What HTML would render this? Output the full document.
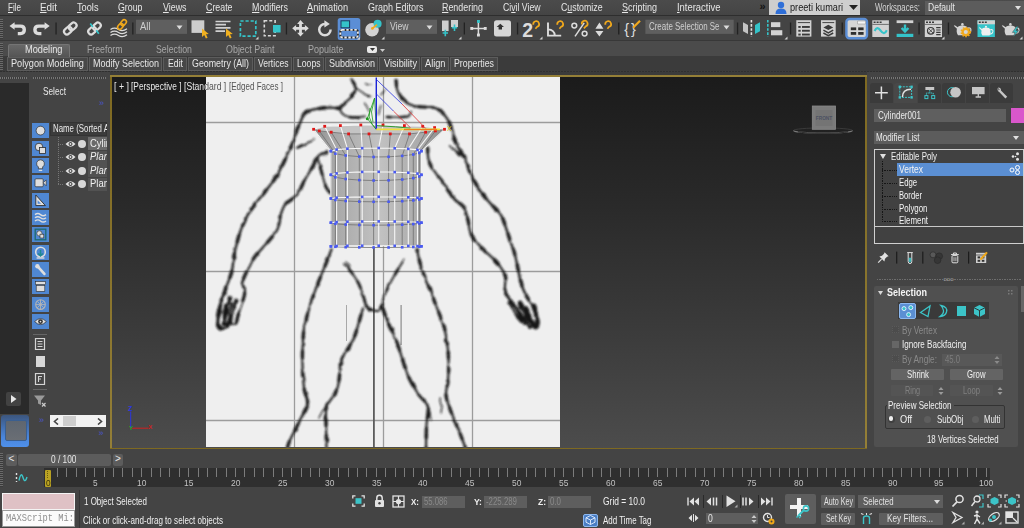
<!DOCTYPE html>
<html><head><meta charset="utf-8"><title>3ds Max</title>
<style>
html,body{margin:0;padding:0;}
body{width:1024px;height:528px;overflow:hidden;background:#444444;position:relative;font-family:"Liberation Sans",sans-serif;}
.r{position:absolute;box-sizing:border-box;}
.t{position:absolute;white-space:nowrap;line-height:1.25;transform-origin:0 0;font-family:"Liberation Sans",sans-serif;}
.m{position:absolute;white-space:nowrap;line-height:1.25;font-family:"Liberation Mono",monospace;}
u{text-decoration:underline;text-underline-offset:1px;}
</style></head>
<body>
<!-- p_top -->
<div class="r" style="left:0px;top:0px;width:1024px;height:16px;background:linear-gradient(#4b4b4b,#444444);"></div>
<div class="r" style="left:0px;top:15px;width:1024px;height:1px;background:#2e2e2e;"></div>
<div class="t" style="left:8px;top:1px;font-size:10.5px;color:#e6e6e6;transform:scaleX(0.769);"><u>F</u>ile</div>
<div class="t" style="left:40px;top:1px;font-size:10.5px;color:#e6e6e6;transform:scaleX(0.940);"><u>E</u>dit</div>
<div class="t" style="left:76.5px;top:1px;font-size:10.5px;color:#e6e6e6;transform:scaleX(0.877);"><u>T</u>ools</div>
<div class="t" style="left:117.5px;top:1px;font-size:10.5px;color:#e6e6e6;transform:scaleX(0.839);"><u>G</u>roup</div>
<div class="t" style="left:162.5px;top:1px;font-size:10.5px;color:#e6e6e6;transform:scaleX(0.845);"><u>V</u>iews</div>
<div class="t" style="left:205.5px;top:1px;font-size:10.5px;color:#e6e6e6;transform:scaleX(0.840);"><u>C</u>reate</div>
<div class="t" style="left:252px;top:1px;font-size:10.5px;color:#e6e6e6;transform:scaleX(0.845);"><u>M</u>odifiers</div>
<div class="t" style="left:307px;top:1px;font-size:10.5px;color:#e6e6e6;transform:scaleX(0.878);"><u>A</u>nimation</div>
<div class="t" style="left:367.5px;top:1px;font-size:10.5px;color:#e6e6e6;transform:scaleX(0.856);">Graph Ed<u>i</u>tors</div>
<div class="t" style="left:442px;top:1px;font-size:10.5px;color:#e6e6e6;transform:scaleX(0.846);"><u>R</u>endering</div>
<div class="t" style="left:503px;top:1px;font-size:10.5px;color:#e6e6e6;transform:scaleX(0.828);">Ci<u>v</u>il View</div>
<div class="t" style="left:560.5px;top:1px;font-size:10.5px;color:#e6e6e6;transform:scaleX(0.837);">C<u>u</u>stomize</div>
<div class="t" style="left:622px;top:1px;font-size:10.5px;color:#e6e6e6;transform:scaleX(0.857);"><u>S</u>cripting</div>
<div class="t" style="left:677px;top:1px;font-size:10.5px;color:#e6e6e6;transform:scaleX(0.897);"><u>I</u>nteractive</div>
<div class="t" style="left:759.5px;top:0px;font-size:11px;color:#121212;font-weight:bold;">&raquo;</div>
<div class="r" style="left:769px;top:0px;width:91px;height:15px;background:#cecece;"></div>
<svg class="r" style="left:775px;top:1px;" width="12" height="13" viewBox="0 0 12 13"><circle cx="6" cy="4" r="3.2" fill="#2f6fd8"/><path d="M0.5 13 Q0.5 7.6 6 7.6 Q11.5 7.6 11.5 13 Z" fill="#2f6fd8"/></svg>
<div class="t" style="left:789.5px;top:1px;font-size:10.5px;color:#1a1a1a;transform:scaleX(0.873);">preeti kumari</div>
<svg class="r" style="left:849px;top:5px;" width="9" height="6" viewBox="0 0 9 6"><path d="M0 0 L9 0 L4.5 5 Z" fill="#222"/></svg>
<div class="t" style="left:874.5px;top:1px;font-size:10.5px;color:#d4d4d4;transform:scaleX(0.744);top:1px;">Workspaces:</div>
<div class="r" style="left:924.5px;top:1px;width:99.5px;height:14px;background:#5c5c5c;"></div>
<svg class="r" style="left:1015px;top:6px;" width="6" height="4" viewBox="0 0 6 4"><path d="M0 0 L6 0 L3 4 Z" fill="#e0e0e0"/></svg>
<div class="t" style="left:928px;top:1px;font-size:10.5px;color:#e6e6e6;transform:scaleX(0.811);top:1px;">Default</div>
<div class="r" style="left:0px;top:16px;width:1024px;height:25px;background:#444444;"></div>
<div class="r" style="left:0px;top:19px;width:3px;height:20px;background:repeating-linear-gradient(#6a6a6a 0 1px,#3a3a3a 1px 2px);"></div>
<svg class="r" style="left:0;top:0" width="1024" height="44" viewBox="0 0 1024 44"><path d="M9.5 26 L14.6 22.3 L14.6 24.4 L20.5 24.4 Q26 24.4 26 29.8 Q26 35.2 20.5 35.2 L17.8 35.2 L17.8 32 L20.3 32 Q22.6 32 22.6 29.8 Q22.6 27.7 20.3 27.7 L14.6 27.7 L14.6 29.8 Z" fill="#dcdcdc"/><path d="M49.7 26 L44.6 22.3 L44.6 24.4 L38.7 24.4 Q33.2 24.4 33.2 29.8 Q33.2 35.2 38.7 35.2 L41.4 35.2 L41.4 32 L38.9 32 Q36.6 32 36.6 29.8 Q36.6 27.7 38.9 27.7 L44.6 27.7 L44.6 29.8 Z" fill="#dcdcdc"/><rect x="55.4" y="22.5" width="1.3" height="12" fill="#222"/><g transform="translate(70.3 28.5) rotate(-42)" fill="none" stroke="#dcdcdc" stroke-width="2.2"><rect x="-7.4" y="-2.9" width="8.5" height="5.8" rx="2.9"/><rect x="-1.1" y="-2.9" width="8.5" height="5.8" rx="2.9"/></g><g transform="translate(94.5 28.5) rotate(-42)" fill="none" stroke="#dcdcdc" stroke-width="2.2"><rect x="-7.4" y="-2.9" width="8.5" height="5.8" rx="2.9"/><rect x="-1.1" y="-2.9" width="8.5" height="5.8" rx="2.9"/></g><path d="M90.3 23.5 L92.8 27 M96.3 30.2 L98.8 33.8" stroke="#35c3c9" stroke-width="1.7"/><path d="M110.5 29.5 Q114.5 26.8 118.5 29.5 T127 28.8 M110.5 32.5 Q114.5 29.8 118.5 32.5 T127 31.8 M110.5 35.5 Q114.5 32.8 118.5 35.5 T127 34.8" fill="none" stroke="#dcdcdc" stroke-width="1.3"/><g transform="translate(122 24.5) rotate(-50)" fill="none" stroke="#f0a81c" stroke-width="1.6"><rect x="-5.6" y="-2.2" width="6.4" height="4.4" rx="2.2"/><rect x="-0.8" y="-2.2" width="6.4" height="4.4" rx="2.2"/></g><rect x="132.2" y="22.5" width="1.3" height="12" fill="#222"/><rect x="136" y="19.7" width="51" height="14.2" fill="#5f5f5f"/><path d="M176.5 25.5 h6 l-3 4 Z" fill="#dcdcdc"/><rect x="191.5" y="20.3" width="12.8" height="12.6" fill="#cdcdcd"/><path d="M0 0 L0 8.4 L2.2 6.4 L3.9 10 L5.6 9.2 L4 5.8 L6.8 5.6 Z" fill="#f0b020" transform="translate(202 28.5)"/><path d="M215.5 21.5 H230.5 M215.5 24.7 H226 M215.5 27.9 H230.5 M215.5 31.1 H225" stroke="#d0d0d0" stroke-width="1.7"/><path d="M0 0 L0 8.4 L2.2 6.4 L3.9 10 L5.6 9.2 L4 5.8 L6.8 5.6 Z" fill="#f0b020" transform="translate(226 28.5)"/><rect x="240.4" y="21" width="15.4" height="15.2" fill="none" stroke="#35c3c9" stroke-width="1.7" stroke-dasharray="3.2 1.9"/><path d="M258.5 39.5 h-3 l3 -3 Z" fill="#d0d0d0"/><rect x="264.3" y="20.8" width="10.8" height="15" fill="none" stroke="#d8d8d8" stroke-width="1.6" stroke-dasharray="3 2"/><rect x="273" y="25" width="7.6" height="7.5" fill="#35c3c9"/><rect x="285.8" y="22.5" width="1.3" height="12" fill="#222"/><g transform="translate(300.5 28.3)" fill="#dcdcdc"><path d="M0 -8.3 L3.4 -4.4 L1.4 -4.4 L1.4 -1.4 L4.4 -1.4 L4.4 -3.4 L8.3 0 L4.4 3.4 L4.4 1.4 L1.4 1.4 L1.4 4.4 L3.4 4.4 L0 8.3 L-3.4 4.4 L-1.4 4.4 L-1.4 1.4 L-4.4 1.4 L-4.4 3.4 L-8.3 0 L-4.4 -3.4 L-4.4 -1.4 L-1.4 -1.4 L-1.4 -4.4 L-3.4 -4.4 Z"/></g><path d="M330.6 29.6 A5.7 5.7 0 1 1 324.9 23.9" fill="none" stroke="#dcdcdc" stroke-width="2.5"/><path d="M324.4 20.2 L329.8 23.9 L324.4 27.6 Z" fill="#dcdcdc"/><rect x="337.7" y="18" width="22.6" height="22" rx="2.5" fill="#5b8ed6"/><rect x="341" y="20.8" width="8.6" height="7" fill="#35c3c9" stroke="#1c3a5e" stroke-width="1"/><rect x="340.3" y="29.9" width="17.6" height="7.6" rx="2" fill="none" stroke="#2a2a2a" stroke-width="2"/><rect x="340.3" y="29.9" width="17.6" height="7.6" rx="2" fill="none" stroke="#ececec" stroke-width="1.8" stroke-dasharray="2.4 1.6"/><path d="M360 39.8 h-3 l3 -3 Z" fill="#d0d0d0"/><circle cx="372" cy="29.7" r="6.8" fill="#d2d2d2"/><circle cx="377.6" cy="23.8" r="4" fill="#35c3c9"/><path d="M372.2 28.6 L377 24.6" stroke="#f0a81c" stroke-width="1.8"/><circle cx="372.4" cy="28.4" r="1.3" fill="#f0a81c"/><path d="M384.5 39.5 h-3 l3 -3 Z" fill="#d0d0d0"/><rect x="386" y="19.7" width="51" height="14.2" fill="#5f5f5f"/><path d="M426.5 25.5 h6 l-3 4 Z" fill="#dcdcdc"/><rect x="442" y="20.5" width="6.6" height="10.6" fill="#cfcfcf"/><rect x="451" y="20" width="7" height="7" fill="#cfcfcf"/><path d="M445.3 29.8 V36.2 M442.6 33 H448 M454.5 24.6 V31 M451.8 27.8 H457.2" stroke="#35c3c9" stroke-width="1.6"/><path d="M461.5 39.5 h-3 l3 -3 Z" fill="#d0d0d0"/><rect x="463.7" y="22.5" width="1.3" height="12" fill="#222"/><path d="M478.4 22 V35 M471.5 28.4 H485.5" stroke="#dcdcdc" stroke-width="1.5"/><rect x="477" y="20" width="2.9" height="2.9" fill="#35c3c9"/><rect x="477" y="33.6" width="2.9" height="2.9" fill="#dcdcdc"/><rect x="470.3" y="27" width="2.9" height="2.9" fill="#dcdcdc"/><rect x="483.8" y="27" width="2.9" height="2.9" fill="#dcdcdc"/><rect x="494" y="20.2" width="17" height="16.4" rx="2.5" fill="#d6d6d6"/><path d="M500.3 23.8 L504 27 L502 27 L502 29.4 L498.6 29.4 L498.6 27 L496.6 27 Z" fill="#333"/><rect x="516.9" y="22.5" width="1.3" height="12" fill="#222"/><text x="522.3" y="36.6" font-family="Liberation Sans" font-weight="bold" font-size="19.5" fill="#dcdcdc">2</text><path d="M-2.6 0.6 A2.9 2.9 0 1 1 1.2 2.6 L-0.6 4.6" fill="none" stroke="#f0a81c" stroke-width="1.7" transform="translate(536 24.2)"/><path d="M542.5 39.5 h-3 l3 -3 Z" fill="#d0d0d0"/><path d="M548 22.5 V35.6 H561.2 M548 29.4 Q554.4 29.6 554.8 35.6" fill="none" stroke="#dcdcdc" stroke-width="1.9"/><path d="M-2.6 0.6 A2.9 2.9 0 1 1 1.2 2.6 L-0.6 4.6" fill="none" stroke="#f0a81c" stroke-width="1.7" transform="translate(560 24.2)"/><circle cx="574.3" cy="25.6" r="2.4" fill="none" stroke="#dcdcdc" stroke-width="1.5"/><circle cx="584.6" cy="33.6" r="2.4" fill="none" stroke="#dcdcdc" stroke-width="1.5"/><path d="M575 36.4 L584.2 22.8" stroke="#dcdcdc" stroke-width="1.5"/><path d="M-2.6 0.6 A2.9 2.9 0 1 1 1.2 2.6 L-0.6 4.6" fill="none" stroke="#f0a81c" stroke-width="1.7" transform="translate(584.5 23.8)"/><path d="M595.4 28.8 L599.4 22.5 L603.4 28.8 Z M595.4 31 L599.4 36.6 L603.4 31 Z" fill="#dcdcdc"/><path d="M-2.6 0.6 A2.9 2.9 0 1 1 1.2 2.6 L-0.6 4.6" fill="none" stroke="#f0a81c" stroke-width="1.7" transform="translate(608 24.2)"/><rect x="618.1" y="22.5" width="1.3" height="12" fill="#222"/><text x="624.3" y="33.8" font-family="Liberation Sans" font-size="14.5" fill="#dcdcdc">{</text><text x="631" y="33.8" font-family="Liberation Sans" font-size="14.5" fill="#dcdcdc">}</text><path d="M633 27.8 L640 20.8" stroke="#f0a81c" stroke-width="2.2"/><rect x="645.4" y="19.7" width="88.3" height="14.2" fill="#5f5f5f"/><path d="M723.5 25.5 h6 l-3 4 Z" fill="#dcdcdc"/><rect x="736.9" y="22.5" width="1.3" height="12" fill="#222"/><path d="M743 22.2 L748 25 L748 34 L743 31.2 Z" fill="#c4c4c4"/><path d="M760 22.2 L755 25 L755 34 L760 31.2 Z" fill="#35c3c9"/><path d="M751.4 20 V36.8" stroke="#e4e4e4" stroke-width="1.6" stroke-dasharray="2.6 1.5"/><path d="M767.8 20 V36.8" stroke="#35c3c9" stroke-width="1.6" stroke-dasharray="2.6 1.5"/><rect x="771" y="22.2" width="9.3" height="4.9" fill="#d4d4d4"/><rect x="771" y="30.2" width="11.3" height="5.1" fill="#d4d4d4"/><path d="M787.5 39.5 h-3 l3 -3 Z" fill="#d0d0d0"/><rect x="789.9" y="22.5" width="1.3" height="12" fill="#222"/><rect x="796.3" y="20.2" width="15.1" height="16.4" fill="#d2d2d2"/><path d="M797.8 22.6 H810 " stroke="#444" stroke-width="1"/><rect x="798.3" y="26" width="2.4" height="1.9" fill="#3a3a3a"/><rect x="802" y="26" width="7.8" height="1.9" fill="#3a3a3a"/><rect x="798.3" y="29.8" width="2.4" height="1.9" fill="#3a3a3a"/><rect x="802" y="29.8" width="7.8" height="1.9" fill="#3a3a3a"/><rect x="798.3" y="33.6" width="2.4" height="1.9" fill="#3a3a3a"/><rect x="802" y="33.6" width="7.8" height="1.9" fill="#3a3a3a"/><rect x="821" y="20.2" width="14.7" height="16.4" fill="#d2d2d2"/><path d="M822.4 22.6 H834.2" stroke="#444" stroke-width="1"/><path d="M823.4 27.4 L828.3 24.8 L833.2 27.4 L828.3 30 Z" fill="#3a3a3a"/><path d="M823.4 30.2 L828.3 32.8 L833.2 30.2 M823.4 33 L828.3 35.6 L833.2 33" fill="none" stroke="#3a3a3a" stroke-width="1.5"/><rect x="841.6" y="22.5" width="1.3" height="12" fill="#222"/><rect x="846.4" y="19" width="20.6" height="19.2" rx="3" fill="#d6d6d6" stroke="#5b8ed6" stroke-width="2.4"/><path d="M857.5 21 H865.5 V24 H857.5 Z" fill="#f4f4f4" stroke="#888" stroke-width="0.5"/><rect x="850.8" y="27.4" width="5.4" height="2.8" fill="#2e2e2e"/><rect x="850.8" y="32" width="5.4" height="2.8" fill="#2e2e2e"/><rect x="858.2" y="27.4" width="5.4" height="2.8" fill="#2e2e2e"/><rect x="858.2" y="32" width="5.4" height="2.8" fill="#2e2e2e"/><rect x="872.3" y="20.3" width="16.6" height="16.7" fill="#d2d2d2"/><path d="M873.6 22.3 H882" stroke="#3a3a3a" stroke-width="1.6" stroke-dasharray="2 1"/><path d="M872.3 24.4 H888.9" stroke="#555" stroke-width="0.8"/><path d="M874.6 31 Q877 25.5 880.6 30.6 T886.8 30.2" fill="none" stroke="#35c3c9" stroke-width="2.2"/><rect x="896.6" y="20.3" width="16.7" height="2.8" fill="#d2d2d2"/><rect x="896.6" y="33.8" width="16.7" height="3.2" fill="#35c3c9"/><path d="M905 24.6 V31 M901.6 28 L905 31.6 L908.4 28" fill="none" stroke="#35c3c9" stroke-width="2.4"/><rect x="918.4" y="22.5" width="1.3" height="12" fill="#222"/><rect x="924.8" y="20.3" width="17.2" height="16.7" fill="#d2d2d2"/><path d="M926 22.3 H934.5" stroke="#3a3a3a" stroke-width="1.6" stroke-dasharray="2 1"/><path d="M924.8 24.4 H942" stroke="#555" stroke-width="0.8"/><circle cx="930.8" cy="30.8" r="3.3" fill="none" stroke="#3a3a3a" stroke-width="1.2"/><path d="M928.5 28.5 L933.1 33.1 M933.1 28.5 L928.5 33.1" stroke="#3a3a3a" stroke-width="0.8"/><path d="M936.2 27.6 H940.6 M936.2 30 H940.6 M936.2 32.4 H940.6 M936.2 34.6 H940.6" stroke="#3a3a3a" stroke-width="1.2"/><path d="M944.5 39.5 h-3 l3 -3 Z" fill="#d0d0d0"/><rect x="947.8" y="22.5" width="1.3" height="12" fill="#222"/><g transform="translate(954.4 22.8)" fill="#d4d4d4"><path d="M2.8 5.2 Q3.4 2.6 8 2.6 Q12.6 2.6 13.2 5.2 Q14.6 9 12.4 12.4 L3.6 12.4 Q1.4 9 2.8 5.2 Z"/><path d="M3 6.4 L-0.6 3 L0.4 2.4 L4 5 Z"/><circle cx="8" cy="1.6" r="1.3"/><path d="M13.2 5.4 Q17 4.4 16.4 8 Q15.8 10.6 13 10.6" fill="none" stroke="#d4d4d4" stroke-width="1.3"/></g><circle cx="965.8" cy="32" r="3.2" fill="none" stroke="#f0a81c" stroke-width="2.2"/><circle cx="965.8" cy="32" r="4.6" fill="none" stroke="#f0a81c" stroke-width="1.4" stroke-dasharray="1.6 1.4"/><rect x="977.5" y="20.3" width="17.4" height="16.7" fill="#35c3c9"/><rect x="977.5" y="20.3" width="17.4" height="4" fill="#d2d2d2"/><path d="M978.8 22.3 H987" stroke="#3a3a3a" stroke-width="1.6" stroke-dasharray="2 1"/><g transform="translate(979.4 25.4) scale(0.82)"><g transform="translate(0 0)" fill="#f0f0f0"><path d="M2.8 5.2 Q3.4 2.6 8 2.6 Q12.6 2.6 13.2 5.2 Q14.6 9 12.4 12.4 L3.6 12.4 Q1.4 9 2.8 5.2 Z"/><path d="M3 6.4 L-0.6 3 L0.4 2.4 L4 5 Z"/><circle cx="8" cy="1.6" r="1.3"/><path d="M13.2 5.4 Q17 4.4 16.4 8 Q15.8 10.6 13 10.6" fill="none" stroke="#f0f0f0" stroke-width="1.3"/></g></g><g transform="translate(1002.4 22.8)" fill="#d4d4d4"><path d="M2.8 5.2 Q3.4 2.6 8 2.6 Q12.6 2.6 13.2 5.2 Q14.6 9 12.4 12.4 L3.6 12.4 Q1.4 9 2.8 5.2 Z"/><path d="M3 6.4 L-0.6 3 L0.4 2.4 L4 5 Z"/><circle cx="8" cy="1.6" r="1.3"/><path d="M13.2 5.4 Q17 4.4 16.4 8 Q15.8 10.6 13 10.6" fill="none" stroke="#d4d4d4" stroke-width="1.3"/></g><path d="M1016.6 26.4 L1012.4 32.4 L1015 32.4 L1013.4 37 L1018.6 30.6 L1016 30.6 L1018.4 26.4 Z" fill="#35c3c9" stroke="#444" stroke-width="0.5"/><path d="M1022.5 39.5 h-3 l3 -3 Z" fill="#d0d0d0"/></svg>
<div class="t" style="left:140px;top:20px;font-size:10.5px;color:#cfcfcf;transform:scaleX(0.901);">All</div>
<div class="t" style="left:389.7px;top:20px;font-size:10.5px;color:#cfcfcf;transform:scaleX(0.820);">View</div>
<div class="t" style="left:648.5px;top:20px;font-size:10.5px;color:#cfcfcf;transform:scaleX(0.755);">Create Selection Se</div>
<div class="r" style="left:0px;top:41px;width:1024px;height:15px;background:#4b4b4b;"></div>
<div class="r" style="left:0px;top:56px;width:1024px;height:15px;background:#3b3b3b;"></div>
<div class="r" style="left:0px;top:40px;width:1024px;height:1px;background:#383838;"></div>
<div class="r" style="left:0px;top:43px;width:3px;height:27px;background:repeating-linear-gradient(#6a6a6a 0 1px,#3a3a3a 1px 2px);"></div>
<div class="r" style="left:8px;top:44px;width:61.5px;height:12.5px;background:linear-gradient(#686868,#545454);border:1px solid #747474;border-bottom:none;border-radius:2px 2px 0 0;"></div>
<div class="t" style="left:25px;top:43px;font-size:10.5px;color:#e6e6e6;transform:scaleX(0.880);top:43px;">Modeling</div>
<div class="t" style="left:87px;top:43px;font-size:10.5px;color:#a8a8a8;transform:scaleX(0.833);">Freeform</div>
<div class="t" style="left:156px;top:43px;font-size:10.5px;color:#a8a8a8;transform:scaleX(0.833);">Selection</div>
<div class="t" style="left:225.5px;top:43px;font-size:10.5px;color:#a8a8a8;transform:scaleX(0.848);">Object Paint</div>
<div class="t" style="left:307.5px;top:43px;font-size:10.5px;color:#a8a8a8;transform:scaleX(0.856);">Populate</div>
<div class="r" style="left:367px;top:46px;width:10px;height:7px;background:#e8e8e8;border-radius:2px;"></div>
<svg class="r" style="left:369.5px;top:48px;" width="5" height="3" viewBox="0 0 5 3"><path d="M0 0 L5 0 L2.5 3 Z" fill="#333"/></svg>
<svg class="r" style="left:380px;top:49px;" width="5" height="3" viewBox="0 0 5 3"><path d="M0 0 L5 0 L2.5 3 Z" fill="#ccc"/></svg>
<div class="r" style="left:7px;top:57px;width:80.5px;height:13.5px;background:#474747;border:1px solid #5c5c5c;"></div>
<div class="r" style="left:88.5px;top:57px;width:73.5px;height:13.5px;background:#474747;border:1px solid #5c5c5c;"></div>
<div class="r" style="left:163px;top:57px;width:23.5px;height:13.5px;background:#474747;border:1px solid #5c5c5c;"></div>
<div class="r" style="left:187.5px;top:57px;width:65px;height:13.5px;background:#474747;border:1px solid #5c5c5c;"></div>
<div class="r" style="left:253.5px;top:57px;width:38.5px;height:13.5px;background:#474747;border:1px solid #5c5c5c;"></div>
<div class="r" style="left:293px;top:57px;width:31px;height:13.5px;background:#474747;border:1px solid #5c5c5c;"></div>
<div class="r" style="left:325px;top:57px;width:53px;height:13.5px;background:#474747;border:1px solid #5c5c5c;"></div>
<div class="r" style="left:379px;top:57px;width:41px;height:13.5px;background:#474747;border:1px solid #5c5c5c;"></div>
<div class="r" style="left:421px;top:57px;width:28px;height:13.5px;background:#474747;border:1px solid #5c5c5c;"></div>
<div class="r" style="left:450px;top:57px;width:48px;height:13.5px;background:#474747;border:1px solid #5c5c5c;"></div>
<div class="t" style="left:11px;top:57px;font-size:10.5px;color:#e6e6e6;transform:scaleX(0.874);top:57px;">Polygon Modeling</div>
<div class="t" style="left:93px;top:57px;font-size:10.5px;color:#e6e6e6;transform:scaleX(0.856);top:57px;">Modify Selection</div>
<div class="t" style="left:168px;top:57px;font-size:10.5px;color:#e6e6e6;transform:scaleX(0.829);top:57px;">Edit</div>
<div class="t" style="left:192px;top:57px;font-size:10.5px;color:#e6e6e6;transform:scaleX(0.842);top:57px;">Geometry (All)</div>
<div class="t" style="left:258px;top:57px;font-size:10.5px;color:#e6e6e6;transform:scaleX(0.816);top:57px;">Vertices</div>
<div class="t" style="left:297px;top:57px;font-size:10.5px;color:#e6e6e6;transform:scaleX(0.821);top:57px;">Loops</div>
<div class="t" style="left:329px;top:57px;font-size:10.5px;color:#e6e6e6;transform:scaleX(0.857);top:57px;">Subdivision</div>
<div class="t" style="left:383.5px;top:57px;font-size:10.5px;color:#e6e6e6;transform:scaleX(0.875);top:57px;">Visibility</div>
<div class="t" style="left:425px;top:57px;font-size:10.5px;color:#e6e6e6;transform:scaleX(0.878);top:57px;">Align</div>
<div class="t" style="left:454px;top:57px;font-size:10.5px;color:#e6e6e6;transform:scaleX(0.836);top:57px;">Properties</div>
<div class="r" style="left:0px;top:71px;width:1024px;height:7px;background:#444444;"></div>
<div class="r" style="left:0px;top:71px;width:1024px;height:1px;background:repeating-linear-gradient(90deg,#303030 0 2px,#3c3c3c 2px 3px);"></div>
<div class="r" style="left:110px;top:72px;width:757px;height:3px;background:#3b3b3b;"></div>
<!-- p_left -->
<div class="r" style="left:0px;top:83px;width:28.5px;height:331px;background:#2a2a2a;"></div>
<div class="r" style="left:0px;top:77px;width:27px;height:2px;background:repeating-linear-gradient(90deg,#777 0 1px,#3a3a3a 1px 2px);"></div>
<div class="r" style="left:33px;top:77px;width:73px;height:2px;background:repeating-linear-gradient(90deg,#777 0 1px,#3a3a3a 1px 2px);"></div>
<div class="r" style="left:6px;top:392px;width:14.5px;height:14px;background:#424242;border-radius:2px;"></div>
<svg class="r" style="left:10px;top:395px;" width="7" height="8" viewBox="0 0 7 8"><path d="M1 0 L6.5 4 L1 8 Z" fill="#e8e8e8"/></svg>
<div class="r" style="left:1px;top:414.5px;width:27.5px;height:32.5px;background:linear-gradient(#3c567e,#4a86dc 70%,#4f90ea);border-radius:3px;"></div>
<div class="r" style="left:5px;top:420px;width:21.5px;height:20.5px;background:linear-gradient(#5e6670,#6a6e74);border:1px solid #3a5f90;border-radius:2px;"></div>
<div class="t" style="left:43px;top:84.5px;font-size:10.5px;color:#eaeaea;transform:scaleX(0.788);">Select</div>
<div class="t" style="left:99px;top:98px;font-size:9px;color:#4a55c8;">&raquo;</div>
<div class="r" style="left:31.5px;top:123px;width:17px;height:15.4px;background:#4f87d2;"></div>
<svg class="r" style="left:31.5px;top:123px;" width="17" height="15.4" viewBox="0 0 17 15.4"><circle cx="8.5" cy="7.6" r="4.4" fill="#dedede" stroke="#2c2c2c" stroke-width="0.7"/></svg>
<div class="r" style="left:31.5px;top:140.5px;width:17px;height:15.4px;background:#4f87d2;"></div>
<svg class="r" style="left:31.5px;top:140.5px;" width="17" height="15.4" viewBox="0 0 17 15.4"><circle cx="7" cy="6" r="3.8" fill="#dedede" stroke="#2c2c2c" stroke-width="0.8"/><rect x="7.4" y="6.6" width="6" height="6" fill="#dedede" stroke="#2c2c2c" stroke-width="0.8"/></svg>
<div class="r" style="left:31.5px;top:157.5px;width:17px;height:15.4px;background:#4f87d2;"></div>
<svg class="r" style="left:31.5px;top:157.5px;" width="17" height="15.4" viewBox="0 0 17 15.4"><path d="M8.5 1.8 A3.9 3.9 0 0 1 10.6 9 L10.6 10.8 L6.4 10.8 L6.4 9 A3.9 3.9 0 0 1 8.5 1.8 Z" fill="#dedede" stroke="#2c2c2c" stroke-width="0.7"/><path d="M6.8 12.4 H10.2" stroke="#dedede" stroke-width="1.3"/></svg>
<div class="r" style="left:31.5px;top:175px;width:17px;height:15.4px;background:#4f87d2;"></div>
<svg class="r" style="left:31.5px;top:175px;" width="17" height="15.4" viewBox="0 0 17 15.4"><rect x="3" y="3.8" width="8.2" height="8" rx="1" fill="#dedede" stroke="#2c2c2c" stroke-width="0.7"/><path d="M11.2 7.8 L14.2 5 L14.2 10.8 Z" fill="#dedede" stroke="#2c2c2c" stroke-width="0.6"/></svg>
<div class="r" style="left:31.5px;top:192.5px;width:17px;height:15.4px;background:#4f87d2;"></div>
<svg class="r" style="left:31.5px;top:192.5px;" width="17" height="15.4" viewBox="0 0 17 15.4"><path d="M3.8 2 L3.8 12.6 L13.4 12.6 Z" fill="#dedede" stroke="#2c2c2c" stroke-width="0.9"/><path d="M5.6 10.8 L5.6 7.2 L9 10.8 Z" fill="#4f87d2"/></svg>
<div class="r" style="left:31.5px;top:209.5px;width:17px;height:15.4px;background:#4f87d2;"></div>
<svg class="r" style="left:31.5px;top:209.5px;" width="17" height="15.4" viewBox="0 0 17 15.4"><path d="M3 4.6 Q5.8 2.4 8.5 4.6 T14 4.6 M3 7.8 Q5.8 5.6 8.5 7.8 T14 7.8 M3 11 Q5.8 8.8 8.5 11 T14 11" fill="none" stroke="#dedede" stroke-width="1.4"/></svg>
<div class="r" style="left:31.5px;top:227px;width:17px;height:15.4px;background:#4f87d2;"></div>
<svg class="r" style="left:31.5px;top:227px;" width="17" height="15.4" viewBox="0 0 17 15.4"><rect x="3.2" y="2.2" width="10.6" height="10.6" fill="none" stroke="#1e6a70" stroke-width="1.3"/><circle cx="7.4" cy="6.4" r="2.6" fill="#dedede" stroke="#2c2c2c" stroke-width="0.6"/><rect x="8" y="7.2" width="3.8" height="3.8" fill="#dedede" stroke="#2c2c2c" stroke-width="0.6"/></svg>
<div class="r" style="left:31.5px;top:244.5px;width:17px;height:15.4px;background:#4f87d2;"></div>
<svg class="r" style="left:31.5px;top:244.5px;" width="17" height="15.4" viewBox="0 0 17 15.4"><circle cx="8.5" cy="7" r="4.8" fill="none" stroke="#dedede" stroke-width="1.6"/><path d="M8.5 5 V10 M6.2 8.4 L8.5 10.8 L10.8 8.4" stroke="#1e8a90" stroke-width="1.5" fill="none"/><path d="M4.6 13 H12.4" stroke="#dedede" stroke-width="1.4"/></svg>
<div class="r" style="left:31.5px;top:261.5px;width:17px;height:15.4px;background:#4f87d2;"></div>
<svg class="r" style="left:31.5px;top:261.5px;" width="17" height="15.4" viewBox="0 0 17 15.4"><circle cx="5.4" cy="4.2" r="2.2" fill="#dedede"/><path d="M5.4 4.2 L12.4 12" stroke="#dedede" stroke-width="2.6" stroke-linecap="round"/></svg>
<div class="r" style="left:31.5px;top:279px;width:17px;height:15.4px;background:#4f87d2;"></div>
<svg class="r" style="left:31.5px;top:279px;" width="17" height="15.4" viewBox="0 0 17 15.4"><rect x="3.4" y="2.6" width="10.2" height="3" fill="#dedede" stroke="#2c2c2c" stroke-width="0.6"/><rect x="4.2" y="6.4" width="8.6" height="6" fill="#dedede" stroke="#2c2c2c" stroke-width="0.6"/></svg>
<div class="r" style="left:31.5px;top:296.5px;width:17px;height:15.4px;background:#4f87d2;"></div>
<svg class="r" style="left:31.5px;top:296.5px;" width="17" height="15.4" viewBox="0 0 17 15.4"><circle cx="8.5" cy="7.6" r="4.8" fill="none" stroke="#b4b4b4" stroke-width="1.1"/><path d="M8.5 3 V12.2 M4 7.6 H13 M5.3 4.4 L11.7 10.8 M11.7 4.4 L5.3 10.8" stroke="#b4b4b4" stroke-width="0.9"/></svg>
<div class="r" style="left:31.5px;top:313.5px;width:17px;height:15.4px;background:#4f87d2;"></div>
<svg class="r" style="left:31.5px;top:313.5px;" width="17" height="15.4" viewBox="0 0 17 15.4"><path d="M2.6 7.6 Q8.5 1.6 14.4 7.6 Q8.5 13.6 2.6 7.6 Z" fill="#dedede" stroke="#2c2c2c" stroke-width="0.7"/><circle cx="8.5" cy="7.6" r="2.3" fill="#2c2c2c"/><circle cx="8.5" cy="7.6" r="0.9" fill="#dedede"/></svg>
<div class="r" style="left:33px;top:334px;width:14px;height:1px;background:#666;"></div>
<svg class="r" style="left:34px;top:338px;" width="12" height="12" viewBox="0 0 12 12"><rect x="1.5" y="0.5" width="9" height="11" fill="none" stroke="#d4d4d4" stroke-width="1.2"/><path d="M3.5 3.5 H8.5 M3.5 6 H8.5 M3.5 8.5 H8.5" stroke="#d4d4d4" stroke-width="1.1"/></svg>
<div class="r" style="left:35.5px;top:356px;width:9.5px;height:10.5px;background:#d8d8d8;"></div>
<svg class="r" style="left:34px;top:373px;" width="12" height="12" viewBox="0 0 12 12"><rect x="1.5" y="0.5" width="9" height="11" fill="none" stroke="#d4d4d4" stroke-width="1.2"/><path d="M4.5 9 V3.5 H8 M4.5 6 H7" stroke="#d4d4d4" stroke-width="1.1" fill="none"/></svg>
<div class="r" style="left:33px;top:389px;width:14px;height:1px;background:#666;"></div>
<svg class="r" style="left:33px;top:395px;" width="14" height="12" viewBox="0 0 14 12"><path d="M1 0.5 H12 L8 5.5 V10 L5 8.5 V5.5 Z" fill="#9a9a9a"/><path d="M9 8 L12.5 11.5 M12.5 8 L9 11.5" stroke="#ccc" stroke-width="1.2"/></svg>
<div class="r" style="left:50px;top:122px;width:57px;height:14px;background:#3b3b3b;border:1px solid #333;"></div>
<div class="r" style="left:50px;top:122px;width:57px;height:14px;overflow:hidden"><div class="t" style="left:2.5px;top:0px;font-size:10.5px;color:#eaeaea;transform:scaleX(0.749);">Name (Sorted A</div></div>
<div class="r" style="left:58px;top:143.6px;width:6px;height:1px;background:repeating-linear-gradient(90deg,#777 0 1px,transparent 1px 2px);"></div>
<svg class="r" style="left:65px;top:139.6px;" width="11" height="8" viewBox="0 0 11 8"><path d="M0.5 4 Q5.5 -1.5 10.5 4 Q5.5 9.5 0.5 4 Z" fill="#e6e6e6"/><circle cx="5.5" cy="4" r="2" fill="#444"/><circle cx="5.5" cy="4" r="0.9" fill="#e6e6e6"/></svg>
<div class="r" style="left:77.5px;top:139.6px;width:8px;height:8px;background:#d8d8d8;border-radius:50%;"></div>
<div class="r" style="left:88px;top:137.1px;width:19px;height:13px;background:#6a6a6a;"></div>
<div class="r" style="left:88px;top:136.6px;width:19px;height:14px;overflow:hidden"><div class="t" style="left:2px;top:0px;font-size:10.5px;color:#f0f0f0;transform:scaleX(0.900);">Cylin</div></div>
<div class="r" style="left:58px;top:157.2px;width:6px;height:1px;background:repeating-linear-gradient(90deg,#777 0 1px,transparent 1px 2px);"></div>
<svg class="r" style="left:65px;top:153.2px;" width="11" height="8" viewBox="0 0 11 8"><path d="M0.5 4 Q5.5 -1.5 10.5 4 Q5.5 9.5 0.5 4 Z" fill="#e6e6e6"/><circle cx="5.5" cy="4" r="2" fill="#444"/><circle cx="5.5" cy="4" r="0.9" fill="#e6e6e6"/></svg>
<div class="r" style="left:77.5px;top:153.2px;width:8px;height:8px;background:#d8d8d8;border-radius:50%;"></div>
<div class="r" style="left:88px;top:150.7px;width:19px;height:13px;background:#525252;"></div>
<div class="r" style="left:88px;top:150.2px;width:19px;height:14px;overflow:hidden"><div class="t" style="left:2px;top:0px;font-size:10.5px;color:#f0f0f0;transform:scaleX(0.900);font-style:italic;">Plan</div></div>
<div class="r" style="left:58px;top:170.8px;width:6px;height:1px;background:repeating-linear-gradient(90deg,#777 0 1px,transparent 1px 2px);"></div>
<svg class="r" style="left:65px;top:166.8px;" width="11" height="8" viewBox="0 0 11 8"><path d="M0.5 4 Q5.5 -1.5 10.5 4 Q5.5 9.5 0.5 4 Z" fill="#e6e6e6"/><circle cx="5.5" cy="4" r="2" fill="#444"/><circle cx="5.5" cy="4" r="0.9" fill="#e6e6e6"/></svg>
<div class="r" style="left:77.5px;top:166.8px;width:8px;height:8px;background:#d8d8d8;border-radius:50%;"></div>
<div class="r" style="left:88px;top:164.3px;width:19px;height:13px;background:#525252;"></div>
<div class="r" style="left:88px;top:163.8px;width:19px;height:14px;overflow:hidden"><div class="t" style="left:2px;top:0px;font-size:10.5px;color:#f0f0f0;transform:scaleX(0.900);font-style:italic;">Plan</div></div>
<div class="r" style="left:58px;top:184.4px;width:6px;height:1px;background:repeating-linear-gradient(90deg,#777 0 1px,transparent 1px 2px);"></div>
<svg class="r" style="left:65px;top:180.4px;" width="11" height="8" viewBox="0 0 11 8"><path d="M0.5 4 Q5.5 -1.5 10.5 4 Q5.5 9.5 0.5 4 Z" fill="#e6e6e6"/><circle cx="5.5" cy="4" r="2" fill="#444"/><circle cx="5.5" cy="4" r="0.9" fill="#e6e6e6"/></svg>
<div class="r" style="left:77.5px;top:180.4px;width:8px;height:8px;background:#d8d8d8;border-radius:50%;"></div>
<div class="r" style="left:88px;top:177.9px;width:19px;height:13px;background:#525252;"></div>
<div class="r" style="left:88px;top:177.4px;width:19px;height:14px;overflow:hidden"><div class="t" style="left:2px;top:0px;font-size:10.5px;color:#f0f0f0;transform:scaleX(0.900);">Plan</div></div>
<div class="r" style="left:58px;top:137px;width:1px;height:48px;background:repeating-linear-gradient(#777 0 1px,transparent 1px 2px);"></div>
<div class="r" style="left:50px;top:415px;width:56px;height:12px;background:#f2f2f2;"></div>
<div class="r" style="left:62.5px;top:416px;width:13.5px;height:10px;background:#cdcdcd;"></div>
<svg class="r" style="left:53px;top:417.5px;" width="6" height="7" viewBox="0 0 6 7"><path d="M5 0.5 L1.5 3.5 L5 6.5" fill="none" stroke="#444" stroke-width="1.6"/></svg>
<svg class="r" style="left:97px;top:417.5px;" width="6" height="7" viewBox="0 0 6 7"><path d="M1 0.5 L4.5 3.5 L1 6.5" fill="none" stroke="#444" stroke-width="1.6"/></svg>
<div class="t" style="left:39px;top:415px;font-size:9px;color:#4a55c8;">&raquo;</div>
<div class="t" style="left:98.5px;top:427.5px;font-size:9px;color:#4a55c8;">&raquo;</div>
<!-- p_view -->
<div class="r" style="left:110px;top:75px;width:757px;height:374.5px;background:linear-gradient(#1b1b1b 0%,#2a2a2a 35%,#3c3c3c 70%,#4c4c4c 100%);border:2px solid rgba(205,168,40,0.56);"></div>
<svg class="r" style="left:0;top:0" width="1024" height="528" viewBox="0 0 1024 528"><defs><filter id="bl" filterUnits="userSpaceOnUse" x="200" y="70" width="370" height="385"><feTurbulence type="fractalNoise" baseFrequency="0.11" numOctaves="2" seed="3" result="n"/><feDisplacementMap in="SourceGraphic" in2="n" scale="2.6" xChannelSelector="R" yChannelSelector="G"/><feGaussianBlur stdDeviation="0.85"/></filter><clipPath id="cp"><rect x="206" y="77" width="354" height="370"/></clipPath></defs><rect x="206" y="77" width="354" height="370" fill="#efefef"/><path d="M294.5 77 V447" stroke="#9c9c9c" stroke-width="1.3"/><path d="M383.5 77 V447" stroke="#9c9c9c" stroke-width="1.3"/><path d="M472.5 77 V447" stroke="#9c9c9c" stroke-width="1.3"/><path d="M206 122.5 H560" stroke="#9c9c9c" stroke-width="1.3"/><path d="M206 271.5 H560" stroke="#9c9c9c" stroke-width="1.3"/><path d="M206 420.5 H560" stroke="#9c9c9c" stroke-width="1.3"/><rect x="373" y="247" width="1.8" height="200" fill="#5c5c5c"/><rect x="346" y="305" width="1" height="36" fill="#a8a8a8"/><rect x="400.5" y="305" width="1.2" height="40" fill="#8c8c8c"/><g clip-path="url(#cp)" filter="url(#bl)" fill="none" stroke="#141414" stroke-linecap="round" stroke-linejoin="round"><path d="M351.5 80 C352.2 81.2 355.6 84.8 356.0 87.0 C356.4 89.2 354.8 91.3 354.0 93.0 C353.2 94.7 353.0 95.3 351.5 97.0 C350.0 98.7 346.9 101.2 345.0 103.0 C343.1 104.8 340.8 106.8 340.0 107.5" stroke-width="2"/><path d="M351.5 80 C352.2 81.2 355.6 84.8 356.0 87.0 C356.4 89.2 354.8 91.3 354.0 93.0 C353.2 94.7 353.0 95.3 351.5 97.0 C350.0 98.7 346.9 101.2 345.0 103.0 C343.1 104.8 340.8 106.8 340.0 107.5" stroke-width="3.12" stroke-dasharray="5 9" stroke-dashoffset="0"/><path d="M340 107.5 C340.2 108.2 340.0 110.6 341.0 112.0 C342.0 113.4 343.9 115.1 346.0 116.0 C348.1 116.9 350.5 117.4 353.7 117.5 C356.9 117.6 363.1 116.6 365.0 116.4" stroke-width="1.75"/><path d="M340 107.5 C340.2 108.2 340.0 110.6 341.0 112.0 C342.0 113.4 343.9 115.1 346.0 116.0 C348.1 116.9 350.5 117.4 353.7 117.5 C356.9 117.6 363.1 116.6 365.0 116.4" stroke-width="2.73" stroke-dasharray="8 14" stroke-dashoffset="7"/><path d="M340 108.4 C338.3 108.2 333.4 107.5 330.0 107.5 C326.6 107.5 323.6 107.7 319.6 108.4 C315.6 109.2 309.3 109.6 306.0 112.0 C302.7 114.4 301.7 119.5 300.0 123.0 C298.3 126.5 297.1 129.9 296.0 133.0 C294.9 136.1 295.7 136.2 293.5 141.4 C291.3 146.6 286.2 157.6 283.0 164.0 C279.8 170.4 276.8 175.7 274.0 180.0 C271.2 184.3 269.3 186.2 266.3 190.0 C263.3 193.8 259.1 198.9 256.0 203.0 C252.9 207.1 250.2 210.6 247.9 214.6 C245.6 218.6 243.7 222.9 242.0 227.0 C240.3 231.1 239.3 234.2 238.0 239.0 C236.7 243.8 235.0 250.7 234.0 256.0 C233.0 261.3 233.2 265.7 231.9 271.0 C230.6 276.3 227.8 282.7 226.0 288.0 C224.2 293.3 222.1 298.0 220.8 303.0 C219.5 308.0 218.5 315.5 218.0 318.0" stroke-width="2.25"/><path d="M340 108.4 C338.3 108.2 333.4 107.5 330.0 107.5 C326.6 107.5 323.6 107.7 319.6 108.4 C315.6 109.2 309.3 109.6 306.0 112.0 C302.7 114.4 301.7 119.5 300.0 123.0 C298.3 126.5 297.1 129.9 296.0 133.0 C294.9 136.1 295.7 136.2 293.5 141.4 C291.3 146.6 286.2 157.6 283.0 164.0 C279.8 170.4 276.8 175.7 274.0 180.0 C271.2 184.3 269.3 186.2 266.3 190.0 C263.3 193.8 259.1 198.9 256.0 203.0 C252.9 207.1 250.2 210.6 247.9 214.6 C245.6 218.6 243.7 222.9 242.0 227.0 C240.3 231.1 239.3 234.2 238.0 239.0 C236.7 243.8 235.0 250.7 234.0 256.0 C233.0 261.3 233.2 265.7 231.9 271.0 C230.6 276.3 227.8 282.7 226.0 288.0 C224.2 293.3 222.1 298.0 220.8 303.0 C219.5 308.0 218.5 315.5 218.0 318.0" stroke-width="3.51" stroke-dasharray="6 12" stroke-dashoffset="3"/><path d="M315 140 C313.5 140.6 309.0 142.2 306.0 143.5 C303.0 144.8 298.5 147.2 297.0 148.0" stroke-width="1.625"/><path d="M315 140 C313.5 140.6 309.0 142.2 306.0 143.5 C303.0 144.8 298.5 147.2 297.0 148.0" stroke-width="2.535" stroke-dasharray="9 10" stroke-dashoffset="10"/><path d="M326.5 152.7 C325.6 152.9 322.5 153.2 321.0 154.0 C319.5 154.8 318.9 155.0 317.4 157.3 C315.9 159.6 313.9 164.6 312.0 168.0 C310.1 171.4 308.1 174.0 306.0 177.7 C303.9 181.4 301.9 186.4 299.6 190.0 C297.3 193.6 294.5 196.5 292.0 199.0 C289.5 201.5 286.8 201.8 284.8 204.8 C282.8 207.8 281.2 212.9 280.0 217.0 C278.8 221.1 279.7 224.9 277.4 229.4 C275.1 233.9 269.7 239.5 266.0 244.0 C262.3 248.5 258.0 252.3 255.0 256.5 C252.0 260.7 250.0 264.9 248.0 269.0 C246.0 273.1 243.5 277.5 243.0 281.0 C242.5 284.5 245.0 286.8 245.0 290.0 C245.0 293.2 244.0 296.3 243.0 300.0 C242.0 303.7 240.2 308.0 239.0 312.0 C237.8 316.0 236.5 322.0 236.0 324.0" stroke-width="2.125"/><path d="M326.5 152.7 C325.6 152.9 322.5 153.2 321.0 154.0 C319.5 154.8 318.9 155.0 317.4 157.3 C315.9 159.6 313.9 164.6 312.0 168.0 C310.1 171.4 308.1 174.0 306.0 177.7 C303.9 181.4 301.9 186.4 299.6 190.0 C297.3 193.6 294.5 196.5 292.0 199.0 C289.5 201.5 286.8 201.8 284.8 204.8 C282.8 207.8 281.2 212.9 280.0 217.0 C278.8 221.1 279.7 224.9 277.4 229.4 C275.1 233.9 269.7 239.5 266.0 244.0 C262.3 248.5 258.0 252.3 255.0 256.5 C252.0 260.7 250.0 264.9 248.0 269.0 C246.0 273.1 243.5 277.5 243.0 281.0 C242.5 284.5 245.0 286.8 245.0 290.0 C245.0 293.2 244.0 296.3 243.0 300.0 C242.0 303.7 240.2 308.0 239.0 312.0 C237.8 316.0 236.5 322.0 236.0 324.0" stroke-width="3.315" stroke-dasharray="7 15" stroke-dashoffset="6"/><path d="M284.8 204.8 C285.3 204.5 286.8 203.8 288.0 203.0 C289.2 202.2 291.3 200.5 292.0 200.0" stroke-width="1.5"/><path d="M317.4 157.3 C318.0 159.4 319.6 165.1 321.0 170.0 C322.4 174.9 324.3 183.1 326.0 187.0 C327.7 190.9 330.2 192.5 331.0 193.6" stroke-width="1.875"/><path d="M317.4 157.3 C318.0 159.4 319.6 165.1 321.0 170.0 C322.4 174.9 324.3 183.1 326.0 187.0 C327.7 190.9 330.2 192.5 331.0 193.6" stroke-width="2.925" stroke-dasharray="8 11" stroke-dashoffset="9"/><path d="M222 300 C221.5 302.0 219.7 308.0 219.0 312.0 C218.3 316.0 217.5 321.2 218.0 324.0 C218.5 326.8 220.3 328.7 222.0 329.0 C223.7 329.3 226.5 328.2 228.0 326.0 C229.5 323.8 230.5 317.7 231.0 316.0" stroke-width="3"/><path d="M222 300 C221.5 302.0 219.7 308.0 219.0 312.0 C218.3 316.0 217.5 321.2 218.0 324.0 C218.5 326.8 220.3 328.7 222.0 329.0 C223.7 329.3 226.5 328.2 228.0 326.0 C229.5 323.8 230.5 317.7 231.0 316.0" stroke-width="4.68" stroke-dasharray="6 9" stroke-dashoffset="5"/><path d="M226 306 C225.7 308.0 223.8 314.7 224.0 318.0 C224.2 321.3 226.5 324.7 227.0 326.0" stroke-width="2.5"/><path d="M226 306 C225.7 308.0 223.8 314.7 224.0 318.0 C224.2 321.3 226.5 324.7 227.0 326.0" stroke-width="3.9" stroke-dasharray="9 14" stroke-dashoffset="1"/><path d="M232 304 C231.7 306.0 230.0 312.7 230.0 316.0 C230.0 319.3 230.8 323.0 232.0 324.0 C233.2 325.0 236.2 322.3 237.0 322.0" stroke-width="2"/><path d="M232 304 C231.7 306.0 230.0 312.7 230.0 316.0 C230.0 319.3 230.8 323.0 232.0 324.0 C233.2 325.0 236.2 322.3 237.0 322.0" stroke-width="3.12" stroke-dasharray="7 12" stroke-dashoffset="8"/><path d="M230 298 C229.5 300.0 228.0 305.7 227.0 310.0 C226.0 314.3 224.5 321.7 224.0 324.0" stroke-width="3"/><path d="M230 298 C229.5 300.0 228.0 305.7 227.0 310.0 C226.0 314.3 224.5 321.7 224.0 324.0" stroke-width="4.68" stroke-dasharray="5 10" stroke-dashoffset="4"/><path d="M236 300 C235.5 302.0 234.0 308.3 233.0 312.0 C232.0 315.7 230.5 320.3 230.0 322.0" stroke-width="2"/><path d="M236 300 C235.5 302.0 234.0 308.3 233.0 312.0 C232.0 315.7 230.5 320.3 230.0 322.0" stroke-width="3.12" stroke-dasharray="8 15" stroke-dashoffset="0"/><path d="M331.6 249 C330.8 251.0 328.6 256.9 327.0 261.0 C325.4 265.1 323.8 268.7 321.8 273.7 C319.8 278.7 317.1 285.3 315.0 291.0 C312.9 296.7 310.9 303.2 309.4 308.0 C307.9 312.8 306.9 316.7 306.0 320.0 C305.1 323.3 304.6 323.0 304.0 328.0 C303.4 333.0 302.7 343.0 302.5 350.0 C302.3 357.0 302.4 363.7 302.7 370.0 C302.9 376.3 303.3 382.4 304.0 388.0 C304.7 393.6 307.7 398.4 307.0 403.7 C306.3 409.0 302.8 413.9 300.0 420.0 C297.2 426.1 292.1 435.3 290.0 440.0 C287.9 444.7 287.8 446.7 287.3 448.0" stroke-width="2.125"/><path d="M331.6 249 C330.8 251.0 328.6 256.9 327.0 261.0 C325.4 265.1 323.8 268.7 321.8 273.7 C319.8 278.7 317.1 285.3 315.0 291.0 C312.9 296.7 310.9 303.2 309.4 308.0 C307.9 312.8 306.9 316.7 306.0 320.0 C305.1 323.3 304.6 323.0 304.0 328.0 C303.4 333.0 302.7 343.0 302.5 350.0 C302.3 357.0 302.4 363.7 302.7 370.0 C302.9 376.3 303.3 382.4 304.0 388.0 C304.7 393.6 307.7 398.4 307.0 403.7 C306.3 409.0 302.8 413.9 300.0 420.0 C297.2 426.1 292.1 435.3 290.0 440.0 C287.9 444.7 287.8 446.7 287.3 448.0" stroke-width="3.315" stroke-dasharray="6 13" stroke-dashoffset="7"/><path d="M307 396 C307.3 397.3 309.2 401.3 309.0 404.0 C308.8 406.7 306.5 410.7 306.0 412.0" stroke-width="1.25"/><path d="M344 264 C345.3 265.5 349.6 269.7 352.0 273.0 C354.4 276.3 356.9 279.9 358.7 283.6 C360.5 287.3 361.8 291.3 363.0 295.0 C364.2 298.7 365.5 304.0 366.0 305.8" stroke-width="1.75"/><path d="M344 264 C345.3 265.5 349.6 269.7 352.0 273.0 C354.4 276.3 356.9 279.9 358.7 283.6 C360.5 287.3 361.8 291.3 363.0 295.0 C364.2 298.7 365.5 304.0 366.0 305.8" stroke-width="2.73" stroke-dasharray="7 9" stroke-dashoffset="10"/><path d="M346 262 L349 266" stroke-width="1.25"/><path d="M366 305.8 C367.0 306.5 369.9 309.2 372.0 310.0 C374.1 310.8 376.6 311.7 378.4 310.7 C380.1 309.7 381.8 305.1 382.5 304.0" stroke-width="2"/><path d="M366 305.8 C367.0 306.5 369.9 309.2 372.0 310.0 C374.1 310.8 376.6 311.7 378.4 310.7 C380.1 309.7 381.8 305.1 382.5 304.0" stroke-width="3.12" stroke-dasharray="8 12" stroke-dashoffset="2"/><path d="M363 308.4 C362.3 310.7 360.4 317.3 359.0 322.0 C357.6 326.7 356.3 332.2 354.6 336.4 C352.9 340.6 350.9 343.7 349.0 347.0 C347.1 350.3 344.9 351.8 343.4 356.0 C341.9 360.2 340.9 366.8 340.0 372.0 C339.1 377.2 339.1 382.7 337.8 387.0 C336.5 391.3 333.9 394.8 332.0 398.0 C330.1 401.2 327.5 402.8 326.5 406.5 C325.5 410.2 326.0 413.1 326.0 420.0 C326.0 426.9 326.4 443.3 326.5 448.0" stroke-width="2.125"/><path d="M363 308.4 C362.3 310.7 360.4 317.3 359.0 322.0 C357.6 326.7 356.3 332.2 354.6 336.4 C352.9 340.6 350.9 343.7 349.0 347.0 C347.1 350.3 344.9 351.8 343.4 356.0 C341.9 360.2 340.9 366.8 340.0 372.0 C339.1 377.2 339.1 382.7 337.8 387.0 C336.5 391.3 333.9 394.8 332.0 398.0 C330.1 401.2 327.5 402.8 326.5 406.5 C325.5 410.2 326.0 413.1 326.0 420.0 C326.0 426.9 326.4 443.3 326.5 448.0" stroke-width="3.315" stroke-dasharray="6 10" stroke-dashoffset="9"/><path d="M326.5 406.5 C325.8 407.4 323.2 410.1 322.0 412.0 C320.8 413.9 319.5 417.0 319.0 418.0" stroke-width="1.25"/><path d="M396 80 C396.2 81.5 396.3 86.3 397.0 89.0 C397.7 91.7 398.7 93.9 400.0 96.0 C401.3 98.1 402.7 99.9 405.0 101.6 C407.3 103.3 411.0 105.1 414.0 106.0 C417.0 106.9 420.0 106.8 423.0 107.0 C426.0 107.2 430.5 107.0 432.0 107.0" stroke-width="2"/><path d="M396 80 C396.2 81.5 396.3 86.3 397.0 89.0 C397.7 91.7 398.7 93.9 400.0 96.0 C401.3 98.1 402.7 99.9 405.0 101.6 C407.3 103.3 411.0 105.1 414.0 106.0 C417.0 106.9 420.0 106.8 423.0 107.0 C426.0 107.2 430.5 107.0 432.0 107.0" stroke-width="3.12" stroke-dasharray="7 13" stroke-dashoffset="1"/><path d="M432 107 C433.1 107.4 436.6 108.3 438.5 109.5 C440.4 110.7 442.0 112.2 443.6 114.0 C445.2 115.8 446.9 118.1 448.0 120.0 C449.1 121.9 449.7 123.3 450.5 125.5 C451.3 127.7 452.2 130.4 453.0 133.0 C453.8 135.6 454.0 138.3 455.0 141.0 C456.0 143.7 457.5 146.3 459.0 149.0 C460.5 151.7 462.5 154.2 464.0 157.0 C465.5 159.8 466.8 162.9 468.0 166.0 C469.2 169.1 469.7 172.5 471.0 175.5 C472.3 178.5 474.2 181.0 476.0 184.0 C477.8 187.0 479.7 190.4 482.0 193.6 C484.3 196.8 486.9 199.5 490.0 203.0 C493.1 206.5 498.0 210.4 500.7 214.6 C503.4 218.8 504.4 223.5 506.0 228.0 C507.6 232.5 509.0 237.2 510.5 241.7 C512.0 246.2 513.8 250.5 515.0 255.0 C516.2 259.5 517.2 264.8 518.0 268.8 C518.8 272.8 519.2 275.7 520.0 279.0 C520.8 282.3 521.7 285.5 522.9 288.5 C524.1 291.5 525.4 294.1 527.0 297.0 C528.6 299.9 531.0 302.3 532.7 305.8 C534.4 309.3 536.3 316.0 537.0 318.0" stroke-width="2.25"/><path d="M432 107 C433.1 107.4 436.6 108.3 438.5 109.5 C440.4 110.7 442.0 112.2 443.6 114.0 C445.2 115.8 446.9 118.1 448.0 120.0 C449.1 121.9 449.7 123.3 450.5 125.5 C451.3 127.7 452.2 130.4 453.0 133.0 C453.8 135.6 454.0 138.3 455.0 141.0 C456.0 143.7 457.5 146.3 459.0 149.0 C460.5 151.7 462.5 154.2 464.0 157.0 C465.5 159.8 466.8 162.9 468.0 166.0 C469.2 169.1 469.7 172.5 471.0 175.5 C472.3 178.5 474.2 181.0 476.0 184.0 C477.8 187.0 479.7 190.4 482.0 193.6 C484.3 196.8 486.9 199.5 490.0 203.0 C493.1 206.5 498.0 210.4 500.7 214.6 C503.4 218.8 504.4 223.5 506.0 228.0 C507.6 232.5 509.0 237.2 510.5 241.7 C512.0 246.2 513.8 250.5 515.0 255.0 C516.2 259.5 517.2 264.8 518.0 268.8 C518.8 272.8 519.2 275.7 520.0 279.0 C520.8 282.3 521.7 285.5 522.9 288.5 C524.1 291.5 525.4 294.1 527.0 297.0 C528.6 299.9 531.0 302.3 532.7 305.8 C534.4 309.3 536.3 316.0 537.0 318.0" stroke-width="3.51" stroke-dasharray="5 11" stroke-dashoffset="8"/><path d="M386.8 117 C388.2 117.0 392.5 117.3 395.0 117.3 C397.5 117.3 399.7 117.2 402.0 117.0 C404.3 116.8 407.5 116.8 409.0 115.9 C410.5 115.0 410.7 112.2 411.0 111.5" stroke-width="1.625"/><path d="M386.8 117 C388.2 117.0 392.5 117.3 395.0 117.3 C397.5 117.3 399.7 117.2 402.0 117.0 C404.3 116.8 407.5 116.8 409.0 115.9 C410.5 115.0 410.7 112.2 411.0 111.5" stroke-width="2.535" stroke-dasharray="8 9" stroke-dashoffset="4"/><path d="M354 86.5 C354.8 87.1 356.6 88.6 358.7 90.0 C360.8 91.4 364.8 93.8 366.9 94.8 C369.0 95.8 370.8 95.8 371.6 96.0" stroke-width="1.375"/><path d="M364.5 83.6 C365.1 83.8 366.8 84.8 368.0 85.0 C369.2 85.2 371.0 84.8 371.6 84.8" stroke-width="1.25"/><path d="M385.6 90 C385.2 90.4 383.8 91.7 383.0 92.5 C382.2 93.3 381.3 94.4 381.0 94.8" stroke-width="1.25"/><path d="M364.5 103 C364.9 103.7 366.2 105.6 367.0 107.0 C367.8 108.4 368.8 110.5 369.2 111.2" stroke-width="1.125"/><path d="M381 105.3 C380.8 106.1 380.0 108.4 379.6 110.0 C379.2 111.6 378.8 113.9 378.6 114.7" stroke-width="1.125"/><path d="M427.7 148 C427.8 149.3 427.6 153.3 428.0 156.0 C428.4 158.7 428.8 161.3 430.0 164.0 C431.2 166.7 433.2 169.3 435.0 172.0 C436.8 174.7 438.8 177.0 441.0 180.0 C443.2 183.0 445.7 186.7 448.0 190.0 C450.3 193.3 452.4 197.2 455.0 200.0 C457.6 202.8 461.5 203.7 463.7 207.0 C465.9 210.3 466.8 215.5 468.0 220.0 C469.2 224.5 468.7 229.3 471.0 234.0 C473.3 238.7 477.9 243.5 482.0 248.0 C486.1 252.5 492.6 257.7 495.8 261.0 C499.0 264.3 499.4 265.5 501.0 268.0 C502.6 270.5 504.9 273.2 505.6 276.0 C506.3 278.8 505.0 282.2 505.0 285.0 C505.0 287.8 504.4 290.0 505.6 293.0 C506.8 296.0 509.6 299.7 512.0 303.0 C514.4 306.3 517.7 309.8 520.0 313.0 C522.3 316.2 525.0 320.5 526.0 322.0" stroke-width="2.125"/><path d="M427.7 148 C427.8 149.3 427.6 153.3 428.0 156.0 C428.4 158.7 428.8 161.3 430.0 164.0 C431.2 166.7 433.2 169.3 435.0 172.0 C436.8 174.7 438.8 177.0 441.0 180.0 C443.2 183.0 445.7 186.7 448.0 190.0 C450.3 193.3 452.4 197.2 455.0 200.0 C457.6 202.8 461.5 203.7 463.7 207.0 C465.9 210.3 466.8 215.5 468.0 220.0 C469.2 224.5 468.7 229.3 471.0 234.0 C473.3 238.7 477.9 243.5 482.0 248.0 C486.1 252.5 492.6 257.7 495.8 261.0 C499.0 264.3 499.4 265.5 501.0 268.0 C502.6 270.5 504.9 273.2 505.6 276.0 C506.3 278.8 505.0 282.2 505.0 285.0 C505.0 287.8 504.4 290.0 505.6 293.0 C506.8 296.0 509.6 299.7 512.0 303.0 C514.4 306.3 517.7 309.8 520.0 313.0 C522.3 316.2 525.0 320.5 526.0 322.0" stroke-width="3.315" stroke-dasharray="6 11" stroke-dashoffset="2"/><path d="M450.5 146 C451.2 146.7 453.5 148.5 455.0 150.0 C456.5 151.5 458.8 154.2 459.5 155.0" stroke-width="1.75"/><path d="M450.5 146 C451.2 146.7 453.5 148.5 455.0 150.0 C456.5 151.5 458.8 154.2 459.5 155.0" stroke-width="2.73" stroke-dasharray="9 9" stroke-dashoffset="9"/><path d="M446.5 190 C447.9 191.5 452.1 196.2 455.0 199.0 C457.9 201.8 462.2 205.7 463.7 207.0" stroke-width="1.5"/><path d="M520 303 C521.3 305.2 525.8 312.2 528.0 316.0 C530.2 319.8 531.5 324.2 533.0 326.0 C534.5 327.8 536.3 328.7 537.0 327.0 C537.7 325.3 537.5 319.5 537.0 316.0 C536.5 312.5 534.5 307.7 534.0 306.0" stroke-width="3"/><path d="M520 303 C521.3 305.2 525.8 312.2 528.0 316.0 C530.2 319.8 531.5 324.2 533.0 326.0 C534.5 327.8 536.3 328.7 537.0 327.0 C537.7 325.3 537.5 319.5 537.0 316.0 C536.5 312.5 534.5 307.7 534.0 306.0" stroke-width="4.68" stroke-dasharray="5 12" stroke-dashoffset="1"/><path d="M513 304 C514.5 306.3 519.2 314.2 522.0 318.0 C524.8 321.8 528.7 325.5 530.0 327.0" stroke-width="2.5"/><path d="M513 304 C514.5 306.3 519.2 314.2 522.0 318.0 C524.8 321.8 528.7 325.5 530.0 327.0" stroke-width="3.9" stroke-dasharray="8 10" stroke-dashoffset="8"/><path d="M509 302 C510.2 304.2 513.5 311.3 516.0 315.0 C518.5 318.7 522.7 322.5 524.0 324.0" stroke-width="2"/><path d="M509 302 C510.2 304.2 513.5 311.3 516.0 315.0 C518.5 318.7 522.7 322.5 524.0 324.0" stroke-width="3.12" stroke-dasharray="6 15" stroke-dashoffset="4"/><path d="M526 308 C526.8 309.5 529.5 314.0 531.0 317.0 C532.5 320.0 534.3 324.5 535.0 326.0" stroke-width="2.5"/><path d="M526 308 C526.8 309.5 529.5 314.0 531.0 317.0 C532.5 320.0 534.3 324.5 535.0 326.0" stroke-width="3.9" stroke-dasharray="9 13" stroke-dashoffset="0"/><path d="M519 306 C520.0 307.5 523.2 312.2 525.0 315.0 C526.8 317.8 529.2 321.7 530.0 323.0" stroke-width="1.75"/><path d="M519 306 C520.0 307.5 523.2 312.2 525.0 315.0 C526.8 317.8 529.2 321.7 530.0 323.0" stroke-width="2.73" stroke-dasharray="7 11" stroke-dashoffset="7"/><path d="M417 249 C417.3 250.7 418.2 255.7 419.0 259.0 C419.8 262.3 420.7 265.1 421.9 268.8 C423.1 272.5 424.4 277.0 426.0 281.0 C427.6 285.0 430.2 289.3 431.7 293.0 C433.2 296.7 433.8 299.7 435.0 303.0 C436.2 306.3 437.8 310.0 439.0 313.0 C440.2 316.0 441.1 318.5 442.0 321.0 C442.9 323.5 443.6 323.8 444.5 328.0 C445.4 332.2 446.8 339.9 447.5 346.0 C448.2 352.1 448.6 358.8 448.7 364.5 C448.8 370.2 448.4 374.9 448.0 380.0 C447.6 385.1 445.7 390.2 446.0 395.0 C446.3 399.8 448.4 404.3 450.0 409.0 C451.6 413.7 453.9 418.5 455.7 423.0 C457.5 427.5 459.4 431.8 461.0 436.0 C462.6 440.2 464.8 446.0 465.5 448.0" stroke-width="2.125"/><path d="M417 249 C417.3 250.7 418.2 255.7 419.0 259.0 C419.8 262.3 420.7 265.1 421.9 268.8 C423.1 272.5 424.4 277.0 426.0 281.0 C427.6 285.0 430.2 289.3 431.7 293.0 C433.2 296.7 433.8 299.7 435.0 303.0 C436.2 306.3 437.8 310.0 439.0 313.0 C440.2 316.0 441.1 318.5 442.0 321.0 C442.9 323.5 443.6 323.8 444.5 328.0 C445.4 332.2 446.8 339.9 447.5 346.0 C448.2 352.1 448.6 358.8 448.7 364.5 C448.8 370.2 448.4 374.9 448.0 380.0 C447.6 385.1 445.7 390.2 446.0 395.0 C446.3 399.8 448.4 404.3 450.0 409.0 C451.6 413.7 453.9 418.5 455.7 423.0 C457.5 427.5 459.4 431.8 461.0 436.0 C462.6 440.2 464.8 446.0 465.5 448.0" stroke-width="3.315" stroke-dasharray="5 9" stroke-dashoffset="3"/><path d="M440 398 C440.3 399.2 441.8 402.7 442.0 405.0 C442.2 407.3 441.2 410.8 441.0 412.0" stroke-width="1.25"/><path d="M404.6 259 C403.3 261.0 399.4 266.9 397.0 271.0 C394.6 275.1 391.7 280.1 389.9 283.6 C388.1 287.1 387.2 289.1 386.0 292.0 C384.8 294.9 383.1 299.3 382.5 300.8" stroke-width="1.75"/><path d="M404.6 259 C403.3 261.0 399.4 266.9 397.0 271.0 C394.6 275.1 391.7 280.1 389.9 283.6 C388.1 287.1 387.2 289.1 386.0 292.0 C384.8 294.9 383.1 299.3 382.5 300.8" stroke-width="2.73" stroke-dasharray="6 12" stroke-dashoffset="6"/><path d="M382.8 308.4 C383.8 311.2 386.7 319.4 389.0 325.0 C391.3 330.6 394.6 336.5 396.8 342.0 C399.0 347.5 400.1 352.4 402.0 358.0 C403.9 363.6 405.5 370.0 408.0 375.7 C410.5 381.4 413.7 386.9 417.0 392.0 C420.3 397.1 426.1 401.0 427.7 406.5 C429.3 412.0 426.8 418.1 426.5 425.0 C426.2 431.9 426.1 444.2 426.0 448.0" stroke-width="2.125"/><path d="M382.8 308.4 C383.8 311.2 386.7 319.4 389.0 325.0 C391.3 330.6 394.6 336.5 396.8 342.0 C399.0 347.5 400.1 352.4 402.0 358.0 C403.9 363.6 405.5 370.0 408.0 375.7 C410.5 381.4 413.7 386.9 417.0 392.0 C420.3 397.1 426.1 401.0 427.7 406.5 C429.3 412.0 426.8 418.1 426.5 425.0 C426.2 431.9 426.1 444.2 426.0 448.0" stroke-width="3.315" stroke-dasharray="9 10" stroke-dashoffset="2"/><path d="M427.7 406.5 C428.1 407.8 429.4 411.8 430.0 414.0 C430.6 416.2 430.8 419.0 431.0 420.0" stroke-width="1.5"/></g><defs><linearGradient id="mg" x1="0" x2="1" y1="0" y2="0"><stop offset="0" stop-color="#8c8c8c"/><stop offset="0.12" stop-color="#a4a4a4"/><stop offset="0.5" stop-color="#c2c2c2"/><stop offset="0.85" stop-color="#a8a8a8"/><stop offset="1" stop-color="#868686"/></linearGradient></defs><path d="M313.6 129.3 L324.7 126.3 L340.4 125.6 L360.8 125 L383 125 L404.4 125.6 L422.7 126.3 L434.6 127.6 L444.5 129.3 L421.4 151 L421.4 246 L330.9 246 L330.9 151 Z" fill="url(#mg)"/><path d="M313.6 129.3 L324.7 126.3 L340.4 125.6 L360.8 125 L383 125 L404.4 125.6 L422.7 126.3 L434.6 127.6 L444.5 129.3 L435.4 130.9 L425.6 132.2 L409.5 133.9 L390.3 133.9 L369 133.9 L348.6 133.9 L331.2 132.2 L319.3 130.9 L313.6 129.3 Z" fill="#c4c4c4"/><path d="M313.6 129.3 L319.3 130.9 L331.2 132.2 L348.6 133.9 L369.0 133.9 L390.3 133.9 L409.5 133.9 L425.6 132.2 L435.4 130.9 L444.5 129.3 M330.9 151.2 L335.4 153.7 L345.7 155.5 L359.3 156.6 L373.6 157.0 L388.6 156.8 L402.2 155.9 L413.3 154.5 L419.3 152.9 L421.4 151.2 M330.9 174.8 L335.4 177.3 L345.7 179.0 L359.3 180.1 L373.6 180.5 L388.6 180.3 L402.2 179.5 L413.3 178.1 L419.3 176.5 L421.4 174.8 M330.9 198.6 L335.4 200.0 L345.7 201.0 L359.3 201.6 L373.6 201.8 L388.6 201.7 L402.2 201.2 L413.3 200.4 L419.3 199.5 L421.4 198.6 M330.9 222.7 L335.4 223.8 L345.7 224.6 L359.3 225.0 L373.6 225.2 L388.6 225.1 L402.2 224.7 L413.3 224.1 L419.3 223.5 L421.4 222.7 M330.9 246.3 L335.4 246.8 L345.7 247.2 L359.3 247.4 L373.6 247.5 L388.6 247.5 L402.2 247.3 L413.3 247.0 L419.3 246.7 L421.4 246.3 M313.6 129.3 L330.9 151.2 L330.9 174.8 L330.9 198.6 L330.9 222.7 L330.9 246.3 M319.3 130.9 L335.4 153.7 L335.4 177.3 L335.4 200.0 L335.4 223.8 L335.4 246.8 M331.2 132.2 L345.7 155.5 L345.7 179.0 L345.7 201.0 L345.7 224.6 L345.7 247.2 M348.6 133.9 L359.3 156.6 L359.3 180.1 L359.3 201.6 L359.3 225.0 L359.3 247.4 M369.0 133.9 L373.6 157.0 L373.6 180.5 L373.6 201.8 L373.6 225.2 L373.6 247.5 M390.3 133.9 L388.6 156.8 L388.6 180.3 L388.6 201.7 L388.6 225.1 L388.6 247.5 M409.5 133.9 L402.2 155.9 L402.2 179.5 L402.2 201.2 L402.2 224.7 L402.2 247.3 M425.6 132.2 L413.3 154.5 L413.3 178.1 L413.3 200.4 L413.3 224.1 L413.3 247.0 M435.4 130.9 L419.3 152.9 L419.3 176.5 L419.3 199.5 L419.3 223.5 L419.3 246.7 M444.5 129.3 L421.4 151.2 L421.4 174.8 L421.4 198.6 L421.4 222.7 L421.4 246.3" fill="none" stroke="#707070" stroke-width="0.8"/><path d="M313.6 129.3 L324.7 126.3 L340.4 125.6 L360.8 125.0 L383.0 125.0 L404.4 125.6 L422.7 126.3 L434.6 127.6 L444.5 129.3 M330.9 151.2 L336.6 149.6 L347.4 148.7 L362.2 148.2 L378.7 148.0 L394.7 148.3 L408.3 148.9 L417.5 149.9 L421.4 151.2 M330.9 174.8 L336.6 173.4 L347.4 172.5 L362.2 171.9 L378.7 171.8 L394.7 172.1 L408.3 172.7 L417.5 173.6 L421.4 174.8 M330.9 198.6 L336.6 197.7 L347.4 197.2 L362.2 196.9 L378.7 196.8 L394.7 197.0 L408.3 197.3 L417.5 197.8 L421.4 198.6 M330.9 222.7 L336.6 222.1 L347.4 221.7 L362.2 221.5 L378.7 221.4 L394.7 221.5 L408.3 221.8 L417.5 222.2 L421.4 222.7 M330.9 246.3 L336.6 246.0 L347.4 245.8 L362.2 245.7 L378.7 245.7 L394.7 245.8 L408.3 245.9 L417.5 246.1 L421.4 246.3 M313.6 129.3 L330.9 151.2 L330.9 174.8 L330.9 198.6 L330.9 222.7 L330.9 246.3 M324.7 126.3 L336.6 149.6 L336.6 173.4 L336.6 197.7 L336.6 222.1 L336.6 246.0 M340.4 125.6 L347.4 148.7 L347.4 172.5 L347.4 197.2 L347.4 221.7 L347.4 245.8 M360.8 125.0 L362.2 148.2 L362.2 171.9 L362.2 196.9 L362.2 221.5 L362.2 245.7 M383.0 125.0 L378.7 148.0 L378.7 171.8 L378.7 196.8 L378.7 221.4 L378.7 245.7 M404.4 125.6 L394.7 148.3 L394.7 172.1 L394.7 197.0 L394.7 221.5 L394.7 245.8 M422.7 126.3 L408.3 148.9 L408.3 172.7 L408.3 197.3 L408.3 221.8 L408.3 245.9 M434.6 127.6 L417.5 149.9 L417.5 173.6 L417.5 197.8 L417.5 222.2 L417.5 246.1 M444.5 129.3 L421.4 151.2 L421.4 174.8 L421.4 198.6 L421.4 222.7 L421.4 246.3" fill="none" stroke="#f6f6f6" stroke-width="1.1"/><g fill="#4a5af0"><rect x="329.6" y="149.8" width="2.6" height="2.6"/><rect x="335.3" y="148.3" width="2.6" height="2.6"/><rect x="346.1" y="147.4" width="2.6" height="2.6"/><rect x="360.9" y="146.9" width="2.6" height="2.6"/><rect x="377.4" y="146.7" width="2.6" height="2.6"/><rect x="393.4" y="147.0" width="2.6" height="2.6"/><rect x="407.0" y="147.6" width="2.6" height="2.6"/><rect x="416.2" y="148.6" width="2.6" height="2.6"/><rect x="420.1" y="149.8" width="2.6" height="2.6"/><rect x="329.6" y="173.5" width="2.6" height="2.6"/><rect x="335.3" y="172.1" width="2.6" height="2.6"/><rect x="346.1" y="171.2" width="2.6" height="2.6"/><rect x="360.9" y="170.6" width="2.6" height="2.6"/><rect x="377.4" y="170.5" width="2.6" height="2.6"/><rect x="393.4" y="170.8" width="2.6" height="2.6"/><rect x="407.0" y="171.4" width="2.6" height="2.6"/><rect x="416.2" y="172.3" width="2.6" height="2.6"/><rect x="420.1" y="173.5" width="2.6" height="2.6"/><rect x="329.6" y="197.2" width="2.6" height="2.6"/><rect x="335.3" y="196.4" width="2.6" height="2.6"/><rect x="346.1" y="195.9" width="2.6" height="2.6"/><rect x="360.9" y="195.6" width="2.6" height="2.6"/><rect x="377.4" y="195.5" width="2.6" height="2.6"/><rect x="393.4" y="195.7" width="2.6" height="2.6"/><rect x="407.0" y="196.0" width="2.6" height="2.6"/><rect x="416.2" y="196.5" width="2.6" height="2.6"/><rect x="420.1" y="197.2" width="2.6" height="2.6"/><rect x="329.6" y="221.4" width="2.6" height="2.6"/><rect x="335.3" y="220.8" width="2.6" height="2.6"/><rect x="346.1" y="220.4" width="2.6" height="2.6"/><rect x="360.9" y="220.2" width="2.6" height="2.6"/><rect x="377.4" y="220.1" width="2.6" height="2.6"/><rect x="393.4" y="220.2" width="2.6" height="2.6"/><rect x="407.0" y="220.5" width="2.6" height="2.6"/><rect x="416.2" y="220.9" width="2.6" height="2.6"/><rect x="420.1" y="221.4" width="2.6" height="2.6"/><rect x="329.6" y="245.0" width="2.6" height="2.6"/><rect x="335.3" y="244.7" width="2.6" height="2.6"/><rect x="346.1" y="244.5" width="2.6" height="2.6"/><rect x="360.9" y="244.4" width="2.6" height="2.6"/><rect x="377.4" y="244.4" width="2.6" height="2.6"/><rect x="393.4" y="244.5" width="2.6" height="2.6"/><rect x="407.0" y="244.6" width="2.6" height="2.6"/><rect x="416.2" y="244.8" width="2.6" height="2.6"/><rect x="420.1" y="245.0" width="2.6" height="2.6"/><rect x="329.6" y="149.8" width="2.6" height="2.6"/><rect x="334.1" y="152.4" width="2.6" height="2.6"/><rect x="344.4" y="154.2" width="2.6" height="2.6"/><rect x="358.0" y="155.3" width="2.6" height="2.6"/><rect x="372.3" y="155.7" width="2.6" height="2.6"/><rect x="387.3" y="155.5" width="2.6" height="2.6"/><rect x="400.9" y="154.6" width="2.6" height="2.6"/><rect x="412.0" y="153.2" width="2.6" height="2.6"/><rect x="418.0" y="151.6" width="2.6" height="2.6"/><rect x="420.1" y="149.8" width="2.6" height="2.6"/><rect x="329.6" y="173.5" width="2.6" height="2.6"/><rect x="334.1" y="176.0" width="2.6" height="2.6"/><rect x="344.4" y="177.7" width="2.6" height="2.6"/><rect x="358.0" y="178.8" width="2.6" height="2.6"/><rect x="372.3" y="179.2" width="2.6" height="2.6"/><rect x="387.3" y="179.0" width="2.6" height="2.6"/><rect x="400.9" y="178.2" width="2.6" height="2.6"/><rect x="412.0" y="176.8" width="2.6" height="2.6"/><rect x="418.0" y="175.2" width="2.6" height="2.6"/><rect x="420.1" y="173.5" width="2.6" height="2.6"/><rect x="329.6" y="197.2" width="2.6" height="2.6"/><rect x="334.1" y="198.7" width="2.6" height="2.6"/><rect x="344.4" y="199.7" width="2.6" height="2.6"/><rect x="358.0" y="200.3" width="2.6" height="2.6"/><rect x="372.3" y="200.5" width="2.6" height="2.6"/><rect x="387.3" y="200.4" width="2.6" height="2.6"/><rect x="400.9" y="199.9" width="2.6" height="2.6"/><rect x="412.0" y="199.1" width="2.6" height="2.6"/><rect x="418.0" y="198.2" width="2.6" height="2.6"/><rect x="420.1" y="197.2" width="2.6" height="2.6"/><rect x="329.6" y="221.4" width="2.6" height="2.6"/><rect x="334.1" y="222.5" width="2.6" height="2.6"/><rect x="344.4" y="223.3" width="2.6" height="2.6"/><rect x="358.0" y="223.7" width="2.6" height="2.6"/><rect x="372.3" y="223.9" width="2.6" height="2.6"/><rect x="387.3" y="223.8" width="2.6" height="2.6"/><rect x="400.9" y="223.4" width="2.6" height="2.6"/><rect x="412.0" y="222.8" width="2.6" height="2.6"/><rect x="418.0" y="222.2" width="2.6" height="2.6"/><rect x="420.1" y="221.4" width="2.6" height="2.6"/><rect x="329.6" y="245.0" width="2.6" height="2.6"/><rect x="334.1" y="245.5" width="2.6" height="2.6"/><rect x="344.4" y="245.9" width="2.6" height="2.6"/><rect x="358.0" y="246.1" width="2.6" height="2.6"/><rect x="372.3" y="246.2" width="2.6" height="2.6"/><rect x="387.3" y="246.2" width="2.6" height="2.6"/><rect x="400.9" y="246.0" width="2.6" height="2.6"/><rect x="412.0" y="245.7" width="2.6" height="2.6"/><rect x="418.0" y="245.4" width="2.6" height="2.6"/><rect x="420.1" y="245.0" width="2.6" height="2.6"/></g><g fill="#e01818"><rect x="312.2" y="127.9" width="2.8" height="2.8"/><rect x="323.3" y="124.9" width="2.8" height="2.8"/><rect x="339.0" y="124.2" width="2.8" height="2.8"/><rect x="359.4" y="123.6" width="2.8" height="2.8"/><rect x="381.6" y="123.6" width="2.8" height="2.8"/><rect x="403.0" y="124.2" width="2.8" height="2.8"/><rect x="421.3" y="124.9" width="2.8" height="2.8"/><rect x="433.2" y="126.2" width="2.8" height="2.8"/><rect x="443.1" y="127.9" width="2.8" height="2.8"/><rect x="317.9" y="129.5" width="2.8" height="2.8"/><rect x="329.8" y="130.8" width="2.8" height="2.8"/><rect x="347.2" y="132.5" width="2.8" height="2.8"/><rect x="367.6" y="132.5" width="2.8" height="2.8"/><rect x="388.9" y="132.5" width="2.8" height="2.8"/><rect x="408.1" y="132.5" width="2.8" height="2.8"/><rect x="424.2" y="130.8" width="2.8" height="2.8"/><rect x="434.0" y="129.5" width="2.8" height="2.8"/></g><path d="M376.3 129.3 L374.6 98 L367.3 118.6 L376.3 129.3 M370 108 L369.2 117 L372.4 124.5 L376.3 129.3 M374.6 98 L371.5 112 L373 122" stroke="#1f9a1f" stroke-width="0.8" fill="none"/><circle cx="367.3" cy="118.8" r="1.5" fill="#1f9a1f"/><path d="M376.3 125.6 L395.4 126.8 L410 128.2" stroke="#1f9a1f" stroke-width="0.9" fill="none"/><path d="M376.3 129.3 V77.5" stroke="#1a22d8" stroke-width="1.4"/><path d="M376.3 79.4 L402 104 M376.3 93.9 L393.4 111" stroke="#2a34e0" stroke-width="0.8"/><path d="M402 104 L426 128.8 M393.4 111 L410.7 128" stroke="#e03030" stroke-width="0.8"/><path d="M376.3 129.3 H440" stroke="#f0e040" stroke-width="1.7"/><path d="M404 129.6 H437" stroke="#f07818" stroke-width="1"/><text x="447" y="130.8" font-family="Liberation Sans" font-size="7" fill="#d8c820">X</text></svg>
<div class="r" style="left:112px;top:80px;width:94px;height:14px;overflow:hidden"><div class="t" style="left:1.75px;top:0px;font-size:10.5px;color:#e8e8e8;transform:scaleX(0.842);">[ + ]</div><div class="t" style="left:18.5px;top:0px;font-size:10.5px;color:#e8e8e8;transform:scaleX(0.794);">[Perspective ]</div><div class="t" style="left:71.75px;top:0px;font-size:10.5px;color:#e8e8e8;transform:scaleX(0.822);">[Standard ]</div><div class="t" style="left:116.75px;top:0px;font-size:10.5px;color:#e8e8e8;transform:scaleX(0.764);">[Edged Faces ]</div></div>
<div class="r" style="left:206px;top:80px;width:90px;height:14px;overflow:hidden"><div class="t" style="left:-92.25px;top:0px;font-size:10.5px;color:#555;transform:scaleX(0.842);">[ + ]</div><div class="t" style="left:-75.5px;top:0px;font-size:10.5px;color:#555;transform:scaleX(0.794);">[Perspective ]</div><div class="t" style="left:-22.25px;top:0px;font-size:10.5px;color:#555;transform:scaleX(0.822);">[Standard ]</div><div class="t" style="left:22.75px;top:0px;font-size:10.5px;color:#555;transform:scaleX(0.764);">[Edged Faces ]</div></div>
<svg class="r" style="left:790px;top:104px;" width="66" height="34" viewBox="0 0 66 34"><path d="M3.5 26.5 A29.5 2.6 0 0 1 62.5 26.5" fill="none" stroke="#3c3c3c" stroke-width="0.9"/><path d="M3.5 26.5 A29.5 2.6 0 0 0 62.5 26.5" fill="none" stroke="#7a7a7a" stroke-width="1.1"/><path d="M8 27.8 A26 2 0 0 0 58 27.8" fill="none" stroke="#1a1a1a" stroke-width="0.8"/><rect x="22.3" y="2" width="23.2" height="23.3" fill="#7b7b7b" stroke="#8a8a8a" stroke-width="0.8"/><rect x="25.5" y="6" width="17" height="16" fill="#747474"/><text x="34" y="15.8" text-anchor="middle" font-family="Liberation Sans" font-weight="bold" font-size="4.8" fill="#4c5262">FRONT</text></svg>
<svg class="r" style="left:122px;top:400px;" width="36" height="34" viewBox="0 0 36 34"><path d="M8.7 28.2 V11.5" stroke="#2a36e0" stroke-width="1"/><path d="M8.7 28.2 H26.5" stroke="#d02020" stroke-width="1"/><text x="6.3" y="10.6" font-family="Liberation Sans" font-weight="bold" font-size="6.5" fill="#2a36e8">Z</text><text x="26.3" y="28.6" font-family="Liberation Sans" font-weight="bold" font-size="6" fill="#d02020">X</text><text x="7" y="29.6" font-family="Liberation Sans" font-weight="bold" font-size="6" fill="#20b020">Y</text></svg>
<!-- p_right -->
<div class="r" style="left:871px;top:77px;width:153px;height:2px;background:repeating-linear-gradient(90deg,#777 0 1px,#3a3a3a 1px 2px);"></div>
<div class="r" style="left:870px;top:82.5px;width:23.2px;height:20px;background:#3b3b3b;border-radius:3px 3px 0 0;"></div>
<div class="r" style="left:894px;top:82.5px;width:23.2px;height:20px;background:#484848;border-radius:3px 3px 0 0;"></div>
<div class="r" style="left:918px;top:82.5px;width:23.2px;height:20px;background:#3b3b3b;border-radius:3px 3px 0 0;"></div>
<div class="r" style="left:942px;top:82.5px;width:23.2px;height:20px;background:#3b3b3b;border-radius:3px 3px 0 0;"></div>
<div class="r" style="left:966px;top:82.5px;width:23.2px;height:20px;background:#3b3b3b;border-radius:3px 3px 0 0;"></div>
<div class="r" style="left:990px;top:82.5px;width:23.2px;height:20px;background:#3b3b3b;border-radius:3px 3px 0 0;"></div>
<svg class="r" style="left:0;top:0" width="1024" height="110" viewBox="0 0 1024 110"><path d="M881.4 86.4 V99.2 M875 92.8 H887.8" stroke="#e2e2e2" stroke-width="1.5"/><rect x="899.8" y="86.8" width="11.8" height="10.6" fill="none" stroke="#3cc4c8" stroke-width="1" stroke-dasharray="2 1"/><path d="M902.4 97 Q902.4 89.4 911 89.2" fill="none" stroke="#e2e2e2" stroke-width="1.5"/><rect x="898.6" y="85.6" width="2.4" height="2.4" fill="#3cc4c8"/><rect x="910.4" y="85.6" width="2.4" height="2.4" fill="#3cc4c8"/><rect x="898.6" y="96.2" width="2.4" height="2.4" fill="#3cc4c8"/><rect x="910.4" y="96.2" width="2.4" height="2.4" fill="#3cc4c8"/><rect x="925.4" y="87" width="8.8" height="3" fill="#c6c6c6"/><path d="M929.8 90 V93 M926.4 96 V93 H933.2 V96" fill="none" stroke="#3cc4c8" stroke-width="1" stroke-dasharray="1.6 0.8"/><rect x="924.9" y="95.6" width="3" height="3" fill="none" stroke="#3cc4c8" stroke-width="1"/><rect x="931.7" y="95.6" width="3" height="3" fill="none" stroke="#3cc4c8" stroke-width="1"/><circle cx="952" cy="92.2" r="4.6" fill="none" stroke="#3cc4c8" stroke-width="1"/><circle cx="955.6" cy="92.2" r="5.3" fill="#c6c6c6"/><rect x="972" y="87" width="12.6" height="7.2" fill="#c6c6c6"/><path d="M978.3 94 V96.6 M975.6 97 H981" stroke="#c6c6c6" stroke-width="1.3"/><path d="M998.2 87.6 A2.8 2.8 0 0 0 999.2 92 L1005.4 98.6 L1007.2 96.8 L1001 90.4 A2.8 2.8 0 0 0 998.2 87.6 L999.6 89.8 L998.6 90.6 Z" fill="#c6c6c6"/></svg>
<div class="r" style="left:874px;top:108.7px;width:132px;height:13.2px;background:#5f5f5f;"></div>
<div class="t" style="left:877.5px;top:109px;font-size:10.5px;color:#eaeaea;transform:scaleX(0.767);">Cylinder001</div>
<div class="r" style="left:1011px;top:108px;width:13px;height:15px;background:#d957cb;"></div>
<div class="r" style="left:874px;top:130.5px;width:150px;height:13.7px;background:#5c5c5c;"></div>
<div class="t" style="left:876px;top:131px;font-size:10.5px;color:#eaeaea;transform:scaleX(0.768);">Modifier List</div>
<svg class="r" style="left:1013px;top:136px;" width="6" height="4" viewBox="0 0 6 4"><path d="M0 0 L6 0 L3 4 Z" fill="#e0e0e0"/></svg>
<div class="r" style="left:874px;top:148.5px;width:150px;height:95px;background:#414141;border:1.5px solid #d0d0d0;"></div>
<div class="r" style="left:875px;top:226.2px;width:148px;height:1.2px;background:#c8c8c8;"></div>
<div class="r" style="left:897px;top:163px;width:125.5px;height:12.5px;background:#5b8fd3;"></div>
<svg class="r" style="left:880px;top:154px;" width="6" height="5" viewBox="0 0 6 5"><path d="M0 0 L6 0 L3 5 Z" fill="#e0e0e0"/></svg>
<div class="t" style="left:891px;top:149.5px;font-size:10.5px;color:#f0f0f0;transform:scaleX(0.750);">Editable Poly</div>
<div class="t" style="left:898.6px;top:163px;font-size:10.5px;color:#f4f4f4;transform:scaleX(0.806);">Vertex</div>
<div class="r" style="left:882px;top:169.8px;width:14.5px;height:1px;background:repeating-linear-gradient(90deg,#161616 0 1.4px,transparent 1.4px 2.4px);"></div>
<div class="t" style="left:898.6px;top:175.8px;font-size:10.5px;color:#f4f4f4;transform:scaleX(0.742);">Edge</div>
<div class="r" style="left:882px;top:182.6px;width:14.5px;height:1px;background:repeating-linear-gradient(90deg,#161616 0 1.4px,transparent 1.4px 2.4px);"></div>
<div class="t" style="left:898.6px;top:188.9px;font-size:10.5px;color:#f4f4f4;transform:scaleX(0.729);">Border</div>
<div class="r" style="left:882px;top:195.7px;width:14.5px;height:1px;background:repeating-linear-gradient(90deg,#161616 0 1.4px,transparent 1.4px 2.4px);"></div>
<div class="t" style="left:898.6px;top:201.7px;font-size:10.5px;color:#f4f4f4;transform:scaleX(0.751);">Polygon</div>
<div class="r" style="left:882px;top:208.5px;width:14.5px;height:1px;background:repeating-linear-gradient(90deg,#161616 0 1.4px,transparent 1.4px 2.4px);"></div>
<div class="t" style="left:898.6px;top:214.4px;font-size:10.5px;color:#f4f4f4;transform:scaleX(0.753);">Element</div>
<div class="r" style="left:882px;top:221.2px;width:14.5px;height:1px;background:repeating-linear-gradient(90deg,#161616 0 1.4px,transparent 1.4px 2.4px);"></div>
<div class="r" style="left:882px;top:161px;width:1px;height:60.5px;background:repeating-linear-gradient(#161616 0 1.4px,transparent 1.4px 2.4px);"></div>
<svg class="r" style="left:1011px;top:152px;" width="9" height="9" viewBox="0 0 9 9"><circle cx="2" cy="4.5" r="1.3" fill="#e2e2e2"/><circle cx="6.5" cy="1.8" r="1.5" fill="#e2e2e2"/><circle cx="6.5" cy="7.2" r="1.5" fill="#e2e2e2"/><circle cx="4.5" cy="4.5" r="0.8" fill="#e2e2e2"/></svg>
<svg class="r" style="left:1009px;top:164.5px;" width="12" height="10" viewBox="0 0 12 10"><circle cx="3" cy="5" r="2" fill="none" stroke="#fff" stroke-width="1"/><circle cx="8.5" cy="2.5" r="2" fill="none" stroke="#fff" stroke-width="1"/><circle cx="8.5" cy="7.5" r="2" fill="none" stroke="#fff" stroke-width="1"/></svg>
<svg class="r" style="left:0;top:0" width="1024" height="270" viewBox="0 0 1024 270"><path d="M884.6 252.2 L888.6 256.2 L887 256.8 L885 258.8 L884.4 261.4 L879.4 256.4 L882 255.8 L884 253.8 Z" fill="#e2e2e2"/><path d="M881.6 259.2 L878.2 262.6" stroke="#e2e2e2" stroke-width="1.2"/><rect x="896.1" y="251.6" width="1.2" height="12" fill="#1c1c1c"/><rect x="922.2" y="251.6" width="1.2" height="12" fill="#1c1c1c"/><rect x="968" y="251.6" width="1.2" height="12" fill="#1c1c1c"/><path d="M907.2 252.6 H912.8 M908.2 252.8 V261.4 Q908.2 263.6 910 263.6 Q911.8 263.6 911.8 261.4 V252.8" fill="none" stroke="#e2e2e2" stroke-width="1"/><path d="M909.2 258 H910.8 V261.6 Q910 262.8 909.2 261.6 Z" fill="#3cc4c8" stroke="#3cc4c8" stroke-width="0.6"/><circle cx="933" cy="254.8" r="3" fill="#585858" stroke="#303030" stroke-width="0.8"/><circle cx="939.2" cy="256.2" r="3.3" fill="#363636" stroke="#2c2c2c" stroke-width="0.8"/><circle cx="937.6" cy="260.2" r="3.3" fill="#363636" stroke="#2c2c2c" stroke-width="0.8"/><path d="M951 254.6 H958.8 M953.4 254.4 V253 H956.4 V254.4" stroke="#e2e2e2" stroke-width="1" fill="none"/><rect x="952" y="255.6" width="5.8" height="7.2" rx="1" fill="none" stroke="#e2e2e2" stroke-width="1"/><path d="M954 257.2 V261.2 M955.9 257.2 V261.2" stroke="#e2e2e2" stroke-width="0.8"/><rect x="976" y="252.8" width="10.2" height="10.2" fill="#cfcfcf"/><path d="M976 255 H986.2" stroke="#444" stroke-width="0.8"/><rect x="977.6" y="256.4" width="2.6" height="2" fill="#333"/><rect x="981.8" y="256.4" width="2.6" height="2" fill="#333"/><rect x="977.6" y="259.8" width="2.6" height="2" fill="#333"/><rect x="981.8" y="259.8" width="2.6" height="2" fill="#333"/><path d="M980.4 259.6 L987 252.4" stroke="#f0a818" stroke-width="2"/></svg>
<div class="r" style="left:876.5px;top:279px;width:144px;height:1px;background:repeating-linear-gradient(90deg,#6e6e6e 0 1.5px,transparent 1.5px 2.5px);"></div>
<div class="r" style="left:942.5px;top:277px;width:11px;height:4px;background:#444;"></div>
<div class="t" style="left:943.5px;top:275.6px;font-size:6px;color:#b0b0b0;">ooo</div>
<div class="r" style="left:873.6px;top:286px;width:144.4px;height:161px;background:#505050;border-radius:2px;"></div>
<div class="r" style="left:1021px;top:286px;width:3px;height:26px;background:#666;"></div>
<svg class="r" style="left:877.5px;top:291px;" width="5" height="4" viewBox="0 0 5 4"><path d="M0 0 L5 0 L2.5 4 Z" fill="#d8d8d8"/></svg>
<div class="t" style="left:887px;top:286px;font-size:10.5px;color:#f4f4f4;transform:scaleX(0.857);font-weight:bold;">Selection</div>
<svg class="r" style="left:1007.5px;top:290px;" width="5" height="5" viewBox="0 0 5 5"><g fill="#7a7a7a"><rect x="0" y="0" width="1.5" height="1.5"/><rect x="3" y="0" width="1.5" height="1.5"/><rect x="0" y="3" width="1.5" height="1.5"/><rect x="3" y="3" width="1.5" height="1.5"/></g></svg>
<div class="r" style="left:898px;top:302px;width:91px;height:17px;background:#3a3a3a;"></div>
<div class="r" style="left:898.5px;top:302.5px;width:17.5px;height:16.5px;background:#5b8fd3;border:1px solid #8cb8f0;border-radius:2px;"></div>
<svg class="r" style="left:900px;top:304px;" width="15" height="14" viewBox="0 0 15 14"><g fill="#35c3c9" stroke="#e8f4ff" stroke-width="0.9"><circle cx="4" cy="4.6" r="2"/><circle cx="10.8" cy="3.6" r="2"/><circle cx="8.6" cy="10.6" r="2"/></g></svg>
<svg class="r" style="left:919px;top:304px;" width="14" height="14" viewBox="0 0 14 14"><path d="M1.5 8.5 L11 2 L9 12.5 Z" fill="none" stroke="#3cc4c8" stroke-width="1.3"/></svg>
<svg class="r" style="left:937px;top:304px;" width="12" height="14" viewBox="0 0 12 14"><path d="M4 1.5 Q11 3 9.5 8 Q8.5 12 3 12.5 Q7 9.5 6.5 6.5 Q6 3.5 4 1.5 Z" fill="none" stroke="#3cc4c8" stroke-width="1.3"/></svg>
<div class="r" style="left:956.5px;top:306px;width:9.5px;height:9.5px;background:#3cc4c8;"></div>
<svg class="r" style="left:973px;top:304px;" width="13" height="14" viewBox="0 0 13 14"><path d="M6.5 1 L12 3.8 V10 L6.5 13 L1 10 V3.8 Z" fill="#3cc4c8"/><path d="M1 3.8 L6.5 6.5 L12 3.8 M6.5 6.5 V13" fill="none" stroke="#2a2a2a" stroke-width="0.9"/></svg>
<div class="r" style="left:892px;top:326.3px;width:7px;height:7px;background:#4c4c4c;border:1px dotted #5a5a5a;"></div>
<div class="t" style="left:901.7px;top:324.1px;font-size:10.5px;color:#8a8a8a;transform:scaleX(0.779);">By Vertex</div>
<div class="r" style="left:892px;top:340.5px;width:7px;height:7px;background:#666666;"></div>
<div class="t" style="left:901.7px;top:338.3px;font-size:10.5px;color:#f0f0f0;transform:scaleX(0.767);">Ignore Backfacing</div>
<div class="r" style="left:892px;top:355.3px;width:7px;height:7px;background:#4c4c4c;border:1px dotted #5a5a5a;"></div>
<div class="t" style="left:901.7px;top:353px;font-size:10.5px;color:#8a8a8a;transform:scaleX(0.789);">By Angle:</div>
<div class="r" style="left:941.5px;top:353.5px;width:60.5px;height:12px;background:#585858;"></div>
<div class="t" style="left:944.5px;top:353px;font-size:10.5px;color:#7e7e7e;transform:scaleX(0.733);">45.0</div>
<svg class="r" style="left:994px;top:355.5px;" width="6" height="8" viewBox="0 0 6 8"><path d="M0.5 3 L3 0 L5.5 3 Z M0.5 5 L3 8 L5.5 5 Z" fill="#8a8a8a"/></svg>
<div class="r" style="left:891px;top:369px;width:53px;height:10.5px;background:#646464;border-radius:1px;"></div>
<div class="t" style="left:906.5px;top:367.5px;font-size:10.5px;color:#f2f2f2;transform:scaleX(0.739);">Shrink</div>
<div class="r" style="left:950px;top:369px;width:53px;height:10.5px;background:#646464;border-radius:1px;"></div>
<div class="t" style="left:967.25px;top:367.5px;font-size:10.5px;color:#f2f2f2;transform:scaleX(0.737);">Grow</div>
<div class="r" style="left:891px;top:385px;width:42px;height:10.5px;background:#545454;border-radius:1px;"></div>
<div class="t" style="left:904.5px;top:384px;font-size:10.5px;color:#808080;transform:scaleX(0.695);">Ring</div>
<div class="r" style="left:950px;top:385px;width:42.5px;height:10.5px;background:#545454;border-radius:1px;"></div>
<div class="t" style="left:962.75px;top:384px;font-size:10.5px;color:#808080;transform:scaleX(0.727);">Loop</div>
<svg class="r" style="left:937.5px;top:386.5px;" width="6" height="8" viewBox="0 0 6 8"><path d="M0.5 3 L3 0 L5.5 3 Z M0.5 5 L3 8 L5.5 5 Z" fill="#9a9a9a"/></svg>
<svg class="r" style="left:996.5px;top:386.5px;" width="6" height="8" viewBox="0 0 6 8"><path d="M0.5 3 L3 0 L5.5 3 Z M0.5 5 L3 8 L5.5 5 Z" fill="#9a9a9a"/></svg>
<div class="r" style="left:884.5px;top:405px;width:120.5px;height:24px;background:transparent;border:1px solid #333;border-radius:2px;"></div>
<div class="r" style="left:887px;top:400px;width:67px;height:10px;background:#505050;"></div>
<div class="t" style="left:888.4px;top:399px;font-size:10.5px;color:#f0f0f0;transform:scaleX(0.761);">Preview Selection</div>
<div class="r" style="left:887.5px;top:415.5px;width:7px;height:7px;background:#404040;border-radius:50%;"></div>
<div class="r" style="left:888.6px;top:416.4px;width:4.8px;height:4.8px;background:#f0f0f0;border-radius:50%;"></div>
<div class="t" style="left:899.8px;top:413px;font-size:10.5px;color:#f0f0f0;transform:scaleX(0.882);">Off</div>
<div class="r" style="left:924px;top:415.5px;width:7px;height:7px;background:#5e5e5e;border-radius:50%;"></div>
<div class="t" style="left:937px;top:413px;font-size:10.5px;color:#f0f0f0;transform:scaleX(0.754);">SubObj</div>
<div class="r" style="left:971.5px;top:415.5px;width:7px;height:7px;background:#5e5e5e;border-radius:50%;"></div>
<div class="t" style="left:983.9px;top:413px;font-size:10.5px;color:#f0f0f0;transform:scaleX(0.744);">Multi</div>
<div class="t" style="left:927px;top:433.4px;font-size:10.5px;color:#f0f0f0;transform:scaleX(0.748);">18 Vertices Selected</div>
<!-- p_bottom -->
<div class="r" style="left:0px;top:449px;width:1024px;height:17px;background:#444444;"></div>
<div class="r" style="left:6px;top:454px;width:10.5px;height:12px;background:#5c5c5c;border-radius:2px;"></div>
<div class="t" style="left:8.5px;top:452.5px;font-size:10px;color:#e8e8e8;">&lt;</div>
<div class="r" style="left:18px;top:454px;width:93px;height:12px;background:#5c5c5c;border-radius:2px;"></div>
<div class="t" style="left:51px;top:452.8px;font-size:10.5px;color:#e8e8e8;transform:scaleX(0.793);">0 / 100</div>
<div class="r" style="left:112.5px;top:454px;width:10.5px;height:12px;background:#5c5c5c;border-radius:2px;"></div>
<div class="t" style="left:115px;top:452.5px;font-size:10px;color:#e8e8e8;">&gt;</div>
<div class="r" style="left:43.5px;top:468.3px;width:946.5px;height:19px;background:#2f2f2f;"></div>
<div class="r" style="left:0px;top:453px;width:3px;height:34px;background:repeating-linear-gradient(#6a6a6a 0 1px,#3a3a3a 1px 2px);"></div>
<svg class="r" style="left:15px;top:472px;" width="13" height="12" viewBox="0 0 13 12"><path d="M1.5 1 V3 M1.5 5 V7 M1.5 9 V10" stroke="#e2e2e2" stroke-width="1.4"/><path d="M4 8.5 Q6 -1 8 5.5 T12 5" fill="none" stroke="#3cc4c8" stroke-width="1.4"/></svg>
<svg class="r" style="left:0px;top:468.3px;" width="1024" height="9" viewBox="0 0 1024 9"><path d="M57.5 0 V9 M66.5 0 V9 M76.5 0 V9 M85.5 0 V9 M94.5 0 V9 M104.5 0 V9 M113.5 0 V9 M122.5 0 V9 M132.5 0 V9 M141.5 0 V9 M151.5 0 V9 M160.5 0 V9 M169.5 0 V9 M179.5 0 V9 M188.5 0 V9 M198.5 0 V9 M207.5 0 V9 M216.5 0 V9 M226.5 0 V9 M235.5 0 V9 M244.5 0 V9 M254.5 0 V9 M263.5 0 V9 M273.5 0 V9 M282.5 0 V9 M291.5 0 V9 M301.5 0 V9 M310.5 0 V9 M319.5 0 V9 M329.5 0 V9 M338.5 0 V9 M348.5 0 V9 M357.5 0 V9 M366.5 0 V9 M376.5 0 V9 M385.5 0 V9 M395.5 0 V9 M404.5 0 V9 M413.5 0 V9 M423.5 0 V9 M432.5 0 V9 M441.5 0 V9 M451.5 0 V9 M460.5 0 V9 M470.5 0 V9 M479.5 0 V9 M488.5 0 V9 M498.5 0 V9 M507.5 0 V9 M516.5 0 V9 M526.5 0 V9 M535.5 0 V9 M545.5 0 V9 M554.5 0 V9 M563.5 0 V9 M573.5 0 V9 M582.5 0 V9 M592.5 0 V9 M601.5 0 V9 M610.5 0 V9 M620.5 0 V9 M629.5 0 V9 M638.5 0 V9 M648.5 0 V9 M657.5 0 V9 M667.5 0 V9 M676.5 0 V9 M685.5 0 V9 M695.5 0 V9 M704.5 0 V9 M714.5 0 V9 M723.5 0 V9 M732.5 0 V9 M742.5 0 V9 M751.5 0 V9 M760.5 0 V9 M770.5 0 V9 M779.5 0 V9 M789.5 0 V9 M798.5 0 V9 M807.5 0 V9 M817.5 0 V9 M826.5 0 V9 M835.5 0 V9 M845.5 0 V9 M854.5 0 V9 M864.5 0 V9 M873.5 0 V9 M882.5 0 V9 M892.5 0 V9 M901.5 0 V9 M911.5 0 V9 M920.5 0 V9 M929.5 0 V9 M939.5 0 V9 M948.5 0 V9 M957.5 0 V9 M967.5 0 V9 M976.5 0 V9 M986.5 0 V9" stroke="#7c7c7c" stroke-width="1"/></svg>
<div class="t" style="left:92.51px;top:476.5px;font-size:9.5px;color:#c2c2c2;transform:scaleX(0.871);">5</div>
<div class="t" style="left:137.02px;top:476.5px;font-size:9.5px;color:#c2c2c2;transform:scaleX(0.890);">10</div>
<div class="t" style="left:183.93px;top:476.5px;font-size:9.5px;color:#c2c2c2;transform:scaleX(0.890);">15</div>
<div class="t" style="left:230.84px;top:476.5px;font-size:9.5px;color:#c2c2c2;transform:scaleX(0.890);">20</div>
<div class="t" style="left:277.75px;top:476.5px;font-size:9.5px;color:#c2c2c2;transform:scaleX(0.890);">25</div>
<div class="t" style="left:324.66px;top:476.5px;font-size:9.5px;color:#c2c2c2;transform:scaleX(0.890);">30</div>
<div class="t" style="left:371.57px;top:476.5px;font-size:9.5px;color:#c2c2c2;transform:scaleX(0.890);">35</div>
<div class="t" style="left:418.48px;top:476.5px;font-size:9.5px;color:#c2c2c2;transform:scaleX(0.890);">40</div>
<div class="t" style="left:465.39px;top:476.5px;font-size:9.5px;color:#c2c2c2;transform:scaleX(0.890);">45</div>
<div class="t" style="left:512.3px;top:476.5px;font-size:9.5px;color:#c2c2c2;transform:scaleX(0.890);">50</div>
<div class="t" style="left:559.21px;top:476.5px;font-size:9.5px;color:#c2c2c2;transform:scaleX(0.890);">55</div>
<div class="t" style="left:606.12px;top:476.5px;font-size:9.5px;color:#c2c2c2;transform:scaleX(0.890);">60</div>
<div class="t" style="left:653.03px;top:476.5px;font-size:9.5px;color:#c2c2c2;transform:scaleX(0.890);">65</div>
<div class="t" style="left:699.94px;top:476.5px;font-size:9.5px;color:#c2c2c2;transform:scaleX(0.890);">70</div>
<div class="t" style="left:746.85px;top:476.5px;font-size:9.5px;color:#c2c2c2;transform:scaleX(0.890);">75</div>
<div class="t" style="left:793.76px;top:476.5px;font-size:9.5px;color:#c2c2c2;transform:scaleX(0.890);">80</div>
<div class="t" style="left:840.67px;top:476.5px;font-size:9.5px;color:#c2c2c2;transform:scaleX(0.890);">85</div>
<div class="t" style="left:887.58px;top:476.5px;font-size:9.5px;color:#c2c2c2;transform:scaleX(0.890);">90</div>
<div class="t" style="left:934.49px;top:476.5px;font-size:9.5px;color:#c2c2c2;transform:scaleX(0.890);">95</div>
<div class="t" style="left:978.9px;top:476.5px;font-size:9.5px;color:#c2c2c2;transform:scaleX(0.909);">100</div>
<div class="r" style="left:45px;top:469.8px;width:5.8px;height:17.4px;background:#b9a223;border-radius:1px;"></div>
<div class="r" style="left:47.4px;top:471px;width:1px;height:8px;background:repeating-linear-gradient(#6a5a10 0 1px,transparent 1px 2px);"></div>
<div class="t" style="left:45.6px;top:477px;font-size:9.5px;color:#3a3208;transform:scaleX(0.871);">0</div>
<div class="r" style="left:0px;top:489px;width:1024px;height:39px;background:#444444;"></div>
<div class="r" style="left:1.5px;top:492.5px;width:73.5px;height:17.5px;background:#dfc1c5;border:1px solid #f4f4f4;"></div>
<div class="r" style="left:78.5px;top:490px;width:1.2px;height:38px;background:#353535;"></div>
<div class="r" style="left:1.5px;top:510px;width:73.5px;height:16.5px;background:#fbfbfb;border:1px solid #9a9a9a;"></div>
<div class="m" style="left:6px;top:511.5px;font-size:10.5px;color:#8e8e8e;transform-origin:0 0;transform:scaleX(0.83)">MAXScript Mi:</div>
<div class="t" style="left:83.5px;top:495px;font-size:10.5px;color:#f0f0f0;transform:scaleX(0.760);">1 Object Selected</div>
<div class="t" style="left:82.5px;top:513.5px;font-size:10.5px;color:#f0f0f0;transform:scaleX(0.769);">Click or click-and-drag to select objects</div>
<svg class="r" style="left:352px;top:495px;" width="13" height="12" viewBox="0 0 13 12"><path d="M0.8 3.5 V0.8 H3.5 M9.5 0.8 H12.2 V3.5 M12.2 8.5 V11.2 H9.5 M3.5 11.2 H0.8 V8.5" fill="none" stroke="#e2e2e2" stroke-width="1.3"/><rect x="3.5" y="3.2" width="6" height="5.6" fill="#3cc4c8"/></svg>
<svg class="r" style="left:374px;top:494px;" width="11" height="14" viewBox="0 0 11 14"><path d="M2.8 6 V4 A2.7 2.7 0 0 1 8.2 4 V6" fill="none" stroke="#e2e2e2" stroke-width="1.5"/><rect x="1" y="6" width="9" height="7" rx="1" fill="#e2e2e2"/><circle cx="5.5" cy="9.3" r="1.2" fill="#444"/></svg>
<svg class="r" style="left:392px;top:494.5px;" width="13" height="13" viewBox="0 0 13 13"><rect x="1" y="1" width="11" height="11" fill="none" stroke="#e2e2e2" stroke-width="1.3"/><circle cx="6.5" cy="6.5" r="2.6" fill="#e2e2e2"/><path d="M6.5 1 V4 M6.5 9 V12 M1 6.5 H4 M9 6.5 H12" stroke="#e2e2e2" stroke-width="1.2"/></svg>
<div class="t" style="left:411px;top:495.5px;font-size:9.5px;color:#f0f0f0;transform:scaleX(0.842);font-weight:bold;">X:</div>
<div class="r" style="left:421.5px;top:495.5px;width:43px;height:12px;background:#5e5e5e;"></div>
<div class="t" style="left:423.5px;top:495px;font-size:10.5px;color:#8a8a8a;transform:scaleX(0.731);">55.086</div>
<div class="t" style="left:474px;top:495.5px;font-size:9.5px;color:#f0f0f0;transform:scaleX(0.909);font-weight:bold;">Y:</div>
<div class="r" style="left:484px;top:495.5px;width:43px;height:12px;background:#5e5e5e;"></div>
<div class="t" style="left:486px;top:495px;font-size:10.5px;color:#8a8a8a;transform:scaleX(0.747);">-225.289</div>
<div class="t" style="left:538px;top:495.5px;font-size:9.5px;color:#f0f0f0;transform:scaleX(0.894);font-weight:bold;">Z:</div>
<div class="r" style="left:548px;top:495.5px;width:43px;height:12px;background:#5e5e5e;"></div>
<div class="t" style="left:550px;top:495px;font-size:10.5px;color:#8a8a8a;transform:scaleX(0.753);">0.0</div>
<div class="t" style="left:602.5px;top:495px;font-size:10.5px;color:#f0f0f0;transform:scaleX(0.804);">Grid = 10.0</div>
<div class="r" style="left:583px;top:513.5px;width:15px;height:13px;background:#4a7ec4;border:1px solid #8cb8f0;border-radius:2px;"></div>
<svg class="r" style="left:585px;top:515px;" width="11" height="10" viewBox="0 0 11 10"><path d="M5.5 0.5 L10 2.8 V7.2 L5.5 9.5 L1 7.2 V2.8 Z M1 2.8 L5.5 5 L10 2.8 M5.5 5 V9.5" fill="none" stroke="#e8f0ff" stroke-width="0.9"/></svg>
<div class="t" style="left:602.5px;top:513.5px;font-size:10.5px;color:#f0f0f0;transform:scaleX(0.757);">Add Time Tag</div>
<svg class="r" style="left:687px;top:497px;" width="13" height="9" viewBox="0 0 13 9"><path d="M1 0.5 V8.5" stroke="#e2e2e2" stroke-width="1.4"/><path d="M7 0.5 V8.5 L2.5 4.5 Z M12 0.5 V8.5 L7.5 4.5 Z" fill="#e2e2e2"/></svg>
<svg class="r" style="left:706px;top:497px;" width="13" height="9" viewBox="0 0 13 9"><path d="M5 0.5 V8.5 L0.5 4.5 Z" fill="#e2e2e2"/><path d="M7.5 0.5 V8.5 M10.5 0.5 V8.5" stroke="#e2e2e2" stroke-width="1.5"/></svg>
<svg class="r" style="left:725px;top:495px;" width="13" height="13" viewBox="0 0 13 13"><path d="M1.5 0.5 V12 L10.5 6.2 Z" fill="#e2e2e2"/><path d="M9.5 12.5 L12.5 12.5 L12.5 9.5 Z" fill="#aaa"/></svg>
<svg class="r" style="left:741px;top:497px;" width="13" height="9" viewBox="0 0 13 9"><path d="M2 0.5 V8.5 M5 0.5 V8.5" stroke="#e2e2e2" stroke-width="1.5"/><path d="M8 0.5 V8.5 L12.5 4.5 Z" fill="#e2e2e2"/></svg>
<svg class="r" style="left:760px;top:497px;" width="13" height="9" viewBox="0 0 13 9"><path d="M1 0.5 V8.5 L5.5 4.5 Z M6 0.5 V8.5 L10.5 4.5 Z" fill="#e2e2e2"/><path d="M12 0.5 V8.5" stroke="#e2e2e2" stroke-width="1.4"/></svg>
<div class="r" style="left:702.5px;top:495px;width:1px;height:13px;background:#2a2a2a;"></div>
<div class="r" style="left:722px;top:495px;width:1px;height:13px;background:#2a2a2a;"></div>
<div class="r" style="left:739.5px;top:495px;width:1px;height:13px;background:#2a2a2a;"></div>
<div class="r" style="left:757.5px;top:495px;width:1px;height:13px;background:#2a2a2a;"></div>
<svg class="r" style="left:688px;top:514px;" width="11" height="8" viewBox="0 0 11 8"><path d="M0.5 4 L4 0.8 V7.2 Z M10.5 4 L7 0.8 V7.2 Z" fill="#e2e2e2"/><path d="M5.5 0 V8" stroke="#e2e2e2" stroke-width="1"/></svg>
<div class="r" style="left:705.5px;top:513px;width:52.5px;height:11px;background:#5e5e5e;"></div>
<div class="t" style="left:708px;top:511.8px;font-size:10.5px;color:#e8e8e8;transform:scaleX(0.821);">0</div>
<svg class="r" style="left:750.5px;top:514.5px;" width="6" height="8" viewBox="0 0 6 8"><path d="M0.5 3 L3 0 L5.5 3 Z M0.5 5 L3 8 L5.5 5 Z" fill="#c8c8c8"/></svg>
<svg class="r" style="left:762px;top:512px;" width="13" height="13" viewBox="0 0 13 13"><circle cx="5.5" cy="5.5" r="4" fill="none" stroke="#e2e2e2" stroke-width="1.4"/><path d="M5.5 3 V5.5 H7.5" stroke="#e2e2e2" stroke-width="1" fill="none"/><circle cx="9.5" cy="9.5" r="3" fill="#f0a818"/><circle cx="9.5" cy="9.5" r="1" fill="#444"/></svg>
<div class="r" style="left:784.5px;top:494px;width:31px;height:30px;background:#5e5e5e;border-radius:2px;"></div>
<svg class="r" style="left:788px;top:497px;" width="24" height="24" viewBox="0 0 24 24"><path d="M9 1 H13 V8 H20 V12 H13 V19 H9 V12 H2 V8 H9 Z" fill="#f4f4f4"/><path d="M10 19 L16 13" stroke="#3cc4c8" stroke-width="2"/><circle cx="18" cy="11.5" r="2.6" fill="none" stroke="#3cc4c8" stroke-width="1.6"/><path d="M11 21 L13 19 M8.5 20.5 L10 19" stroke="#3cc4c8" stroke-width="1.4"/></svg>
<div class="r" style="left:820.5px;top:495px;width:34px;height:12.5px;background:#5e5e5e;border-radius:1px;"></div>
<div class="t" style="left:823.5px;top:494.8px;font-size:10.5px;color:#e2e2e2;transform:scaleX(0.680);">Auto Key</div>
<div class="r" style="left:820.5px;top:512.5px;width:34px;height:12px;background:#5e5e5e;border-radius:1px;"></div>
<div class="t" style="left:825.5px;top:512px;font-size:10.5px;color:#e2e2e2;transform:scaleX(0.680);">Set Key</div>
<div class="r" style="left:858px;top:495px;width:85px;height:12.5px;background:#5e5e5e;"></div>
<div class="t" style="left:862.5px;top:494.8px;font-size:10.5px;color:#e2e2e2;transform:scaleX(0.746);">Selected</div>
<svg class="r" style="left:934px;top:499.5px;" width="6" height="4" viewBox="0 0 6 4"><path d="M0 0 L6 0 L3 4 Z" fill="#dcdcdc"/></svg>
<svg class="r" style="left:860px;top:512px;" width="13" height="13" viewBox="0 0 13 13"><path d="M1 1.5 L3.5 2.5 M9.5 2.5 L12 1.5 M6.5 1 V3" stroke="#e2e2e2" stroke-width="1.1"/><path d="M3.5 12 V6 Q3.5 4 6.5 4 Q9.5 4 9.5 6 V12" fill="none" stroke="#3cc4c8" stroke-width="1.4"/></svg>
<div class="r" style="left:878.5px;top:512.5px;width:64.5px;height:12px;background:#5e5e5e;border-radius:1px;"></div>
<div class="t" style="left:887px;top:512px;font-size:10.5px;color:#e2e2e2;transform:scaleX(0.788);">Key Filters...</div>
<svg class="r" style="left:951px;top:494px;" width="14" height="14" viewBox="0 0 14 14"><circle cx="8.5" cy="5" r="3.6" fill="none" stroke="#e2e2e2" stroke-width="1.5"/><path d="M6 7.8 L1.5 12.5" stroke="#e2e2e2" stroke-width="1.8"/></svg>
<svg class="r" style="left:970px;top:494px;" width="15" height="14" viewBox="0 0 15 14"><circle cx="7" cy="5" r="3" fill="none" stroke="#e2e2e2" stroke-width="1.3"/><path d="M5 7.5 L1.5 12" stroke="#e2e2e2" stroke-width="1.5"/><path d="M9 1 H13 V5 M13 9 V13 H9" fill="none" stroke="#3cc4c8" stroke-width="1.2"/></svg>
<svg class="r" style="left:987px;top:494px;" width="15" height="14" viewBox="0 0 15 14"><path d="M1 4 V1 H4 M11 1 H14 V4 M14 10 V13 H11 M4 13 H1 V10" fill="none" stroke="#e2e2e2" stroke-width="1.2"/><path d="M7.5 3 L11.5 5 V9 L7.5 11 L3.5 9 V5 Z" fill="#3cc4c8"/></svg>
<svg class="r" style="left:1004px;top:494px;" width="16" height="14" viewBox="0 0 16 14"><path d="M8 3 L12 5 V9 L8 11 L4 9 V5 Z" fill="#3cc4c8"/><path d="M1 4 V1 H4 M12 1 H15 V4 M15 10 V13 H12 M4 13 H1 V10" fill="none" stroke="#e2e2e2" stroke-width="1.2"/><path d="M1.5 7 H3 M13 7 H14.5" stroke="#e2e2e2" stroke-width="1.2"/></svg>
<svg class="r" style="left:951px;top:511px;" width="14" height="14" viewBox="0 0 14 14"><path d="M2 1.5 L11 6.5 L2 11.5 L5 6.5 Z" fill="none" stroke="#e2e2e2" stroke-width="1.3"/><path d="M10.5 13.5 L13.5 13.5 L13.5 10.5 Z" fill="#aaa"/></svg>
<svg class="r" style="left:971px;top:510px;" width="13" height="15" viewBox="0 0 13 15"><circle cx="6" cy="2" r="1.6" fill="#e2e2e2"/><path d="M6 4 V9 M3 6 L6 5 L9 7 M6 9 L3.5 14 M6 9 L9 13.5" fill="none" stroke="#e2e2e2" stroke-width="1.4"/><path d="M10 14.5 L13 14.5 L13 11.5 Z" fill="#aaa"/></svg>
<svg class="r" style="left:987px;top:510px;" width="15" height="15" viewBox="0 0 15 15"><ellipse cx="7" cy="7" rx="6" ry="3.4" transform="rotate(-35 7 7)" fill="none" stroke="#e2e2e2" stroke-width="1.3"/><circle cx="7" cy="7" r="2" fill="#3cc4c8"/><circle cx="3.5" cy="10" r="1.5" fill="#3cc4c8"/><path d="M11.5 14.5 L14.5 14.5 L14.5 11.5 Z" fill="#aaa"/></svg>
<svg class="r" style="left:1005px;top:511px;" width="14" height="13" viewBox="0 0 14 13"><rect x="1" y="1" width="12" height="11" fill="none" stroke="#e2e2e2" stroke-width="1.4"/><rect x="1" y="1" width="7" height="6" fill="#e2e2e2"/><path d="M8 7 L12 11" stroke="#e2e2e2" stroke-width="1.2"/></svg>
</body></html>
